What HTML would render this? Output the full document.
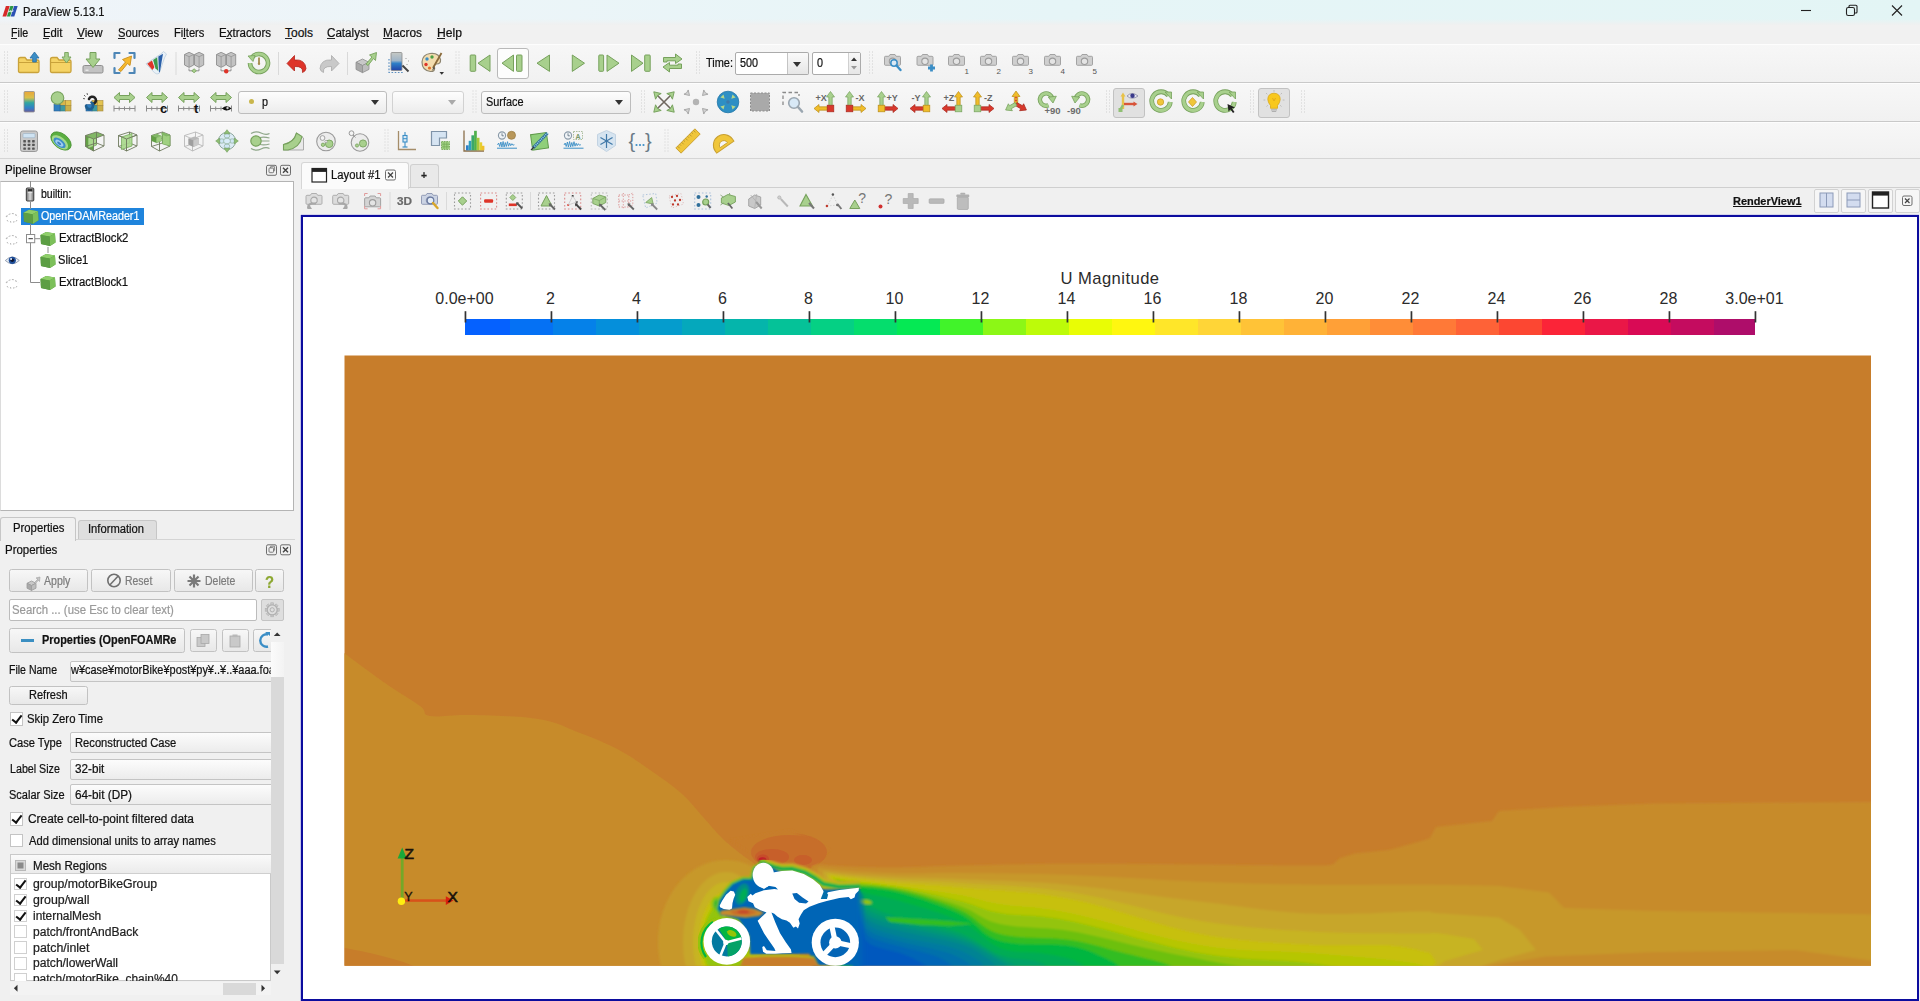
<!DOCTYPE html>
<html>
<head>
<meta charset="utf-8">
<title>ParaView 5.13.1</title>
<style>
*{box-sizing:border-box;margin:0;padding:0}
html,body{width:1920px;height:1001px;overflow:hidden;background:#f0f0f0;font-family:"Liberation Sans",sans-serif;font-size:12px;color:#111}
.abs{position:absolute}
#titlebar{left:0;top:0;width:1920px;height:25px;background:linear-gradient(180deg,rgba(240,240,240,0) 0,rgba(240,240,240,0) 19px,#f0f0f0 25px),linear-gradient(90deg,#eff4f9 0%,#ecf5f8 25%,#e6f5f7 55%,#e3f5f5 100%)}
#titlebar .t{left:23px;top:4px;font-size:12px;color:#1a1a1a;letter-spacing:0px}
#menubar{left:0;top:25px;width:1920px;height:19px;background:#f1f1f1}
#menubar span{position:absolute;top:4px;font-size:12px;color:#111}
#menubar u{text-decoration:underline;text-underline-offset:1px}
.tb{left:0;width:1920px;background:linear-gradient(#f7f7f7,#f1f1f1);border-top:1px solid #fdfdfd;border-bottom:1px solid #c9c9c9}
#tb1{top:44px;height:39px}
#tb2{top:83px;height:39px}
#tb3{top:122px;height:37px;border-bottom:1px solid #d5d5d5}
.grip{position:absolute;width:5px;height:24px;background-image:radial-gradient(circle,#c4c4c4 0.6px,transparent 0.9px);background-size:3px 3px}
.combo{position:absolute;height:23px;border:1px solid #bdbdbd;border-radius:3px;background:linear-gradient(#fdfdfd,#ececec);font-size:12px;line-height:21px;padding-left:6px;color:#111}
.combo:after{content:"";position:absolute;right:7px;top:8px;border:4px solid transparent;border-top:5px solid #333;border-bottom:0}
.combo.dis:after{border-top-color:#aaa}
.combo.dis{border-color:#d2d2d2}
/* panels */
.dockhdr{left:0;width:295px;height:19px;font-size:12px;color:#111}
.dockhdr .t{left:4px;top:2px}
.white{background:#fff;border:1px solid #bdbdbd}
.btn{position:absolute;border:1px solid #c3c3c3;border-radius:2px;background:linear-gradient(#f6f6f6,#e9e9e9);font-size:12px;text-align:center;color:#777}
.lbl{position:absolute;font-size:12px;color:#111;white-space:nowrap}
.field{position:absolute;height:21px;border:1px solid #c6c6c6;border-right:0;background:linear-gradient(#fbfbfb,#ededed);font-size:12px;line-height:19px;padding-left:4px;white-space:nowrap;overflow:hidden}

.tx{position:absolute;white-space:nowrap;transform-origin:0 0;display:inline-block;-webkit-text-stroke:0.22px currentColor}
.pbtn{border:1px solid #c2c2c2;border-radius:2.5px;background:linear-gradient(#f7f7f7,#e8e8e8)}
.fld{border:1px solid #c4c4c4;border-radius:2px 0 0 2px;background:linear-gradient(#fcfcfc,#ececec)}
.cmbbtn{border:1px solid #ababab;border-left:0;border-radius:0 2px 2px 0;background:linear-gradient(#fafafa,#e6e6e6)}
.cmbbtn:after{content:"";position:absolute;left:6px;top:9px;border:4.5px solid transparent;border-top:5px solid #333;border-bottom:0}
.cb{background:#fff;border:1px solid #c4c4c4}
.cb2{width:12.5px;height:12.5px;background:#fff;border:1px solid #d0d0d0}
.cb.on:after,.cb2.on:after{content:"";position:absolute;left:3.4px;top:-0.8px;width:3.6px;height:8px;border:solid #111;border-width:0 2.1px 2.1px 0;transform:rotate(38deg)}
.sep{position:absolute;width:1px;height:24px;background:#d6d6d6}
/* render view */
#rv{left:301px;top:215px;width:1618px;height:786px;background:#fff;border:2px solid #0c0c9e;box-shadow:-1px 0 0 rgba(160,160,230,0.55),0 -1px 0 rgba(160,160,230,0.35)}
</style>
</head>
<body>
<div id="titlebar" class="abs"></div>
<div id="menubar" class="abs"></div>
<div id="tb1" class="abs tb"></div>
<div id="tb2" class="abs tb"></div>
<div id="tb3" class="abs tb"></div>
<span class="tx" style="left:23.0px;top:5.5px;font-size:12px;line-height:12px;color:#141414;transform:scaleX(0.927);">ParaView 5.13.1</span>
<span class="tx" style="left:10.6px;top:26.7px;font-size:12px;line-height:12px;color:#111;transform:scaleX(0.890);">File</span>
<span class="tx" style="left:42.5px;top:26.7px;font-size:12px;line-height:12px;color:#111;transform:scaleX(0.943);">Edit</span>
<span class="tx" style="left:77.0px;top:26.7px;font-size:12px;line-height:12px;color:#111;transform:scaleX(0.989);">View</span>
<span class="tx" style="left:117.5px;top:26.7px;font-size:12px;line-height:12px;color:#111;transform:scaleX(0.931);">Sources</span>
<span class="tx" style="left:174.0px;top:26.7px;font-size:12px;line-height:12px;color:#111;transform:scaleX(0.931);">Filters</span>
<span class="tx" style="left:219.0px;top:26.7px;font-size:12px;line-height:12px;color:#111;transform:scaleX(0.963);">Extractors</span>
<span class="tx" style="left:285.0px;top:26.7px;font-size:12px;line-height:12px;color:#111;transform:scaleX(1.000);">Tools</span>
<span class="tx" style="left:327.0px;top:26.7px;font-size:12px;line-height:12px;color:#111;transform:scaleX(0.969);">Catalyst</span>
<span class="tx" style="left:383.0px;top:26.7px;font-size:12px;line-height:12px;color:#111;transform:scaleX(0.991);">Macros</span>
<span class="tx" style="left:437.0px;top:26.7px;font-size:12px;line-height:12px;color:#111;transform:scaleX(1.013);">Help</span>
<div class="abs " style="left:10.6px;top:38.2px;width:6.0px;height:1.0px;background:#222"></div>
<div class="abs " style="left:42.5px;top:38.2px;width:6.5px;height:1.0px;background:#222"></div>
<div class="abs " style="left:77.0px;top:38.2px;width:7.0px;height:1.0px;background:#222"></div>
<div class="abs " style="left:117.5px;top:38.2px;width:7.0px;height:1.0px;background:#222"></div>
<div class="abs " style="left:183.0px;top:38.2px;width:2.5px;height:1.0px;background:#222"></div>
<div class="abs " style="left:225.5px;top:38.2px;width:5.5px;height:1.0px;background:#222"></div>
<div class="abs " style="left:285.0px;top:38.2px;width:6.5px;height:1.0px;background:#222"></div>
<div class="abs " style="left:327.0px;top:38.2px;width:7.5px;height:1.0px;background:#222"></div>
<div class="abs " style="left:383.0px;top:38.2px;width:9.0px;height:1.0px;background:#222"></div>
<div class="abs " style="left:437.0px;top:38.2px;width:8.0px;height:1.0px;background:#222"></div>
<span class="tx" style="left:705.5px;top:57.3px;font-size:12px;line-height:12px;color:#111;transform:scaleX(0.914);">Time:</span>
<div class="abs " style="left:735.0px;top:52.0px;width:53.0px;height:23.0px;background:#fff;border:1px solid #ababab;border-radius:2px 0 0 2px"></div>
<span class="tx" style="left:740.0px;top:57.3px;font-size:12px;line-height:12px;color:#111;transform:scaleX(0.899);">500</span>
<div class="abs cmbbtn" style="left:787.0px;top:52.0px;width:22.0px;height:23.0px;"></div>
<div class="abs " style="left:787.0px;top:53.0px;width:1.0px;height:21.0px;background:#c4c4c4"></div>
<div class="abs " style="left:812.0px;top:52.0px;width:49.0px;height:23.0px;background:#fff;border:1px solid #ababab;border-radius:2px"></div>
<span class="tx" style="left:817.0px;top:57.3px;font-size:12px;line-height:12px;color:#111;transform:scaleX(0.899);">0</span>
<div class="abs " style="left:848.0px;top:53.0px;width:12.0px;height:21.0px;background:linear-gradient(#f8f8f8,#e6e6e6);border-left:1px solid #d0d0d0"></div>
<div class="abs combo" style="left:238.0px;top:90.5px;width:149.0px;height:23.0px;"></div>
<span class="tx" style="left:262.0px;top:96.1px;font-size:12px;line-height:12px;color:#111;transform:scaleX(0.899);">p</span>
<div class="abs " style="left:249.0px;top:99.0px;width:5.0px;height:5.0px;background:#c9b64c;border-radius:50%"></div>
<div class="abs combo dis" style="left:392.0px;top:90.5px;width:72.0px;height:23.0px;"></div>
<div class="abs combo" style="left:481.0px;top:90.5px;width:150.0px;height:23.0px;"></div>
<span class="tx" style="left:486.0px;top:95.8px;font-size:12px;line-height:12px;color:#111;transform:scaleX(0.907);">Surface</span>
<div class="abs " style="left:497.0px;top:48.0px;width:32.0px;height:30.5px;background:#fdfdfd;border:1px solid #b9b9b9;border-radius:3px"></div>
<div class="abs " style="left:1113.0px;top:87.5px;width:32.0px;height:30.0px;background:#e1e1e1;border:1px solid #c2c2c2;border-radius:3px"></div>
<div class="abs " style="left:1258.0px;top:87.5px;width:32.0px;height:30.0px;background:#e1e1e1;border:1px solid #c2c2c2;border-radius:3px"></div>
<span class="tx" style="left:4.7px;top:164.3px;font-size:12px;line-height:12px;color:#111;transform:scaleX(0.963);">Pipeline Browser</span>
<div class="abs " style="left:0.0px;top:180.5px;width:293.5px;height:330.0px;background:#fff;border:1px solid #b4b4b4;border-left-color:#dcdcdc"></div>
<div class="abs " style="left:21.0px;top:207.7px;width:122.8px;height:17.3px;background:#1f84dc"></div>
<span class="tx" style="left:40.6px;top:187.7px;font-size:12px;line-height:12px;color:#111;transform:scaleX(0.876);">builtin:</span>
<span class="tx" style="left:40.6px;top:209.6px;font-size:12px;line-height:12px;color:#fff;transform:scaleX(0.894);">OpenFOAMReader1</span>
<span class="tx" style="left:59.0px;top:232.2px;font-size:12px;line-height:12px;color:#111;transform:scaleX(0.946);">ExtractBlock2</span>
<span class="tx" style="left:58.0px;top:253.9px;font-size:12px;line-height:12px;color:#111;transform:scaleX(0.927);">Slice1</span>
<span class="tx" style="left:59.0px;top:276.0px;font-size:12px;line-height:12px;color:#111;transform:scaleX(0.941);">ExtractBlock1</span>
<div class="abs " style="left:0.0px;top:539.0px;width:295.0px;height:1.0px;background:#d4d4d4"></div>
<div class="abs " style="left:0.0px;top:517.0px;width:76.0px;height:23.5px;background:#f0f0f0;border:1px solid #c6c6c6;border-bottom:0;border-radius:3px 3px 0 0"></div>
<div class="abs " style="left:77.5px;top:519.5px;width:79.5px;height:19.8px;background:#dedede;border:1px solid #c6c6c6;border-bottom:0;border-radius:3px 3px 0 0"></div>
<span class="tx" style="left:12.5px;top:522.4px;font-size:12px;line-height:12px;color:#111;transform:scaleX(0.942);">Properties</span>
<span class="tx" style="left:88.0px;top:522.6px;font-size:12px;line-height:12px;color:#111;transform:scaleX(0.933);">Information</span>
<span class="tx" style="left:4.7px;top:544.0px;font-size:12px;line-height:12px;color:#111;transform:scaleX(0.956);">Properties</span>
<div class="abs pbtn" style="left:9.0px;top:568.8px;width:79.3px;height:23.5px;"></div>
<div class="abs pbtn" style="left:91.4px;top:568.8px;width:79.2px;height:23.5px;"></div>
<div class="abs pbtn" style="left:173.5px;top:568.8px;width:79.0px;height:23.5px;"></div>
<div class="abs pbtn" style="left:255.3px;top:568.8px;width:28.5px;height:23.5px;"></div>
<span class="tx" style="left:43.6px;top:574.8px;font-size:12px;line-height:12px;color:#7c7c7c;transform:scaleX(0.879);">Apply</span>
<span class="tx" style="left:124.7px;top:574.8px;font-size:12px;line-height:12px;color:#7c7c7c;transform:scaleX(0.871);">Reset</span>
<span class="tx" style="left:204.7px;top:574.8px;font-size:12px;line-height:12px;color:#7c7c7c;transform:scaleX(0.874);">Delete</span>
<span class="tx" style="left:265.0px;top:573.6px;font-size:17px;line-height:17px;color:#8da832;font-weight:bold;transform:scaleX(0.867);">?</span>
<div class="abs " style="left:9.0px;top:598.8px;width:248.3px;height:22.0px;background:#fff;border:1px solid #bcbcbc;border-radius:2px"></div>
<span class="tx" style="left:11.7px;top:603.6px;font-size:12px;line-height:12px;color:#9a9a9a;transform:scaleX(0.948);">Search ... (use Esc to clear text)</span>
<div class="abs " style="left:260.5px;top:598.6px;width:23.3px;height:22.4px;background:#dedede;border:1px solid #c4c4c4;border-radius:2px"></div>
<div class="abs pbtn" style="left:9.0px;top:627.8px;width:176.2px;height:25.0px;"></div>
<div class="abs " style="left:20.8px;top:639.4px;width:13.0px;height:3.0px;background:#3b8fc2"></div>
<span class="tx" style="left:41.6px;top:634.0px;font-size:12px;line-height:12px;color:#111;font-weight:bold;transform:scaleX(0.908);">Properties (OpenFOAMRe</span>
<div class="abs pbtn" style="left:190.0px;top:629.0px;width:26.5px;height:23.2px;"></div>
<div class="abs pbtn" style="left:221.6px;top:629.0px;width:27.0px;height:23.2px;"></div>
<div class="abs pbtn" style="left:253.2px;top:629.0px;width:21.8px;height:23.2px;"></div>
<span class="tx" style="left:9.0px;top:664.4px;font-size:12px;line-height:12px;color:#111;transform:scaleX(0.878);">File Name</span>
<div class="abs fld" style="left:70.0px;top:660.5px;width:206.0px;height:21.0px;"></div>
<span class="tx" style="left:71.0px;top:664.4px;font-size:12px;line-height:12px;color:#111;transform:scaleX(0.912);clip-path:inset(0 6.2% 0 0);">w¥case¥motorBike¥post¥py¥..¥..¥aaa.foam</span>
<div class="abs pbtn" style="left:9.0px;top:685.6px;width:79.3px;height:19.8px;"></div>
<span class="tx" style="left:29.4px;top:689.4px;font-size:12px;line-height:12px;color:#111;transform:scaleX(0.919);">Refresh</span>
<div class="abs cb on" style="left:9.7px;top:712.3px;width:13.3px;height:13.3px;"></div>
<span class="tx" style="left:27.3px;top:712.8px;font-size:12px;line-height:12px;color:#111;transform:scaleX(0.943);">Skip Zero Time</span>
<span class="tx" style="left:8.6px;top:736.7px;font-size:12px;line-height:12px;color:#111;transform:scaleX(0.927);">Case Type</span>
<div class="abs fld" style="left:70.0px;top:732.3px;width:206.0px;height:21.0px;"></div>
<span class="tx" style="left:75.3px;top:736.7px;font-size:12px;line-height:12px;color:#111;transform:scaleX(0.932);">Reconstructed Case</span>
<span class="tx" style="left:9.5px;top:762.9px;font-size:12px;line-height:12px;color:#111;transform:scaleX(0.890);">Label Size</span>
<div class="abs fld" style="left:70.0px;top:758.6px;width:206.0px;height:21.0px;"></div>
<span class="tx" style="left:74.7px;top:762.9px;font-size:12px;line-height:12px;color:#111;transform:scaleX(0.976);">32-bit</span>
<span class="tx" style="left:8.8px;top:788.8px;font-size:12px;line-height:12px;color:#111;transform:scaleX(0.916);">Scalar Size</span>
<div class="abs fld" style="left:70.0px;top:784.4px;width:206.0px;height:21.0px;"></div>
<span class="tx" style="left:74.7px;top:788.8px;font-size:12px;line-height:12px;color:#111;transform:scaleX(0.981);">64-bit (DP)</span>
<div class="abs cb on" style="left:9.5px;top:812.4px;width:13.3px;height:13.3px;"></div>
<span class="tx" style="left:27.6px;top:812.6px;font-size:12px;line-height:12px;color:#111;transform:scaleX(0.991);">Create cell-to-point filtered data</span>
<div class="abs cb" style="left:9.5px;top:834.0px;width:13.3px;height:13.3px;"></div>
<span class="tx" style="left:28.8px;top:834.6px;font-size:12px;line-height:12px;color:#111;transform:scaleX(0.930);">Add dimensional units to array names</span>
<div class="abs " style="left:270.5px;top:627.0px;width:13.5px;height:354.0px;background:#f0f0f0"></div>
<div class="abs " style="left:270.5px;top:642.0px;width:13.5px;height:35.0px;background:linear-gradient(90deg,#fbfbfb,#f3f3f3)"></div>
<div class="abs " style="left:270.5px;top:677.0px;width:13.5px;height:287.0px;background:#d9d9d9"></div>
<div class="abs " style="left:9.5px;top:853.5px;width:261.0px;height:127.5px;background:#fff;border:1px solid #c9c9c9"></div>
<div class="abs " style="left:10.5px;top:854.5px;width:260.0px;height:19.5px;background:linear-gradient(#fafafa,#ebebeb);border-bottom:1px solid #cfcfcf"></div>
<div class="abs " style="left:14.5px;top:859.6px;width:11.5px;height:11.4px;background:#8a8a8a;border:1px solid #b8b8b8;box-shadow:inset 0 0 0 1.5px #d8d8d8"></div>
<span class="tx" style="left:32.6px;top:859.7px;font-size:12px;line-height:12px;color:#111;transform:scaleX(0.963);">Mesh Regions</span>
<div class="abs" style="left:10.5px;top:875px;width:260px;height:105.6px;overflow:hidden">
<div class="abs cb2 on" style="left:3.6px;top:2.6px"></div>
<span class="tx" style="left:22.8px;top:2.7px;font-size:12px;line-height:12px;color:#222;transform:scaleX(1.022)">group/motorBikeGroup</span>
<div class="abs cb2 on" style="left:3.6px;top:18.5px"></div>
<span class="tx" style="left:22.8px;top:18.7px;font-size:12px;line-height:12px;color:#222;transform:scaleX(1.031)">group/wall</span>
<div class="abs cb2 on" style="left:3.6px;top:34.5px"></div>
<span class="tx" style="left:22.8px;top:34.6px;font-size:12px;line-height:12px;color:#222;transform:scaleX(0.993)">internalMesh</span>
<div class="abs cb2" style="left:3.6px;top:50.4px"></div>
<span class="tx" style="left:22.8px;top:50.5px;font-size:12px;line-height:12px;color:#222;transform:scaleX(1.005)">patch/frontAndBack</span>
<div class="abs cb2" style="left:3.6px;top:66.3px"></div>
<span class="tx" style="left:22.8px;top:66.5px;font-size:12px;line-height:12px;color:#222;transform:scaleX(1.031)">patch/inlet</span>
<div class="abs cb2" style="left:3.6px;top:82.2px"></div>
<span class="tx" style="left:22.8px;top:82.4px;font-size:12px;line-height:12px;color:#222;transform:scaleX(1.009)">patch/lowerWall</span>
<div class="abs cb2" style="left:3.6px;top:98.2px"></div>
<span class="tx" style="left:22.8px;top:98.3px;font-size:12px;line-height:12px;color:#222;transform:scaleX(0.991)">patch/motorBike_chain%40</span>
</div>
<div class="abs " style="left:9.5px;top:981.5px;width:261.0px;height:13.5px;background:#f3f3f3"></div>
<div class="abs " style="left:223.0px;top:982.5px;width:33.3px;height:12.0px;background:#d9d9d9"></div>
<div class="abs " style="left:301.0px;top:187.0px;width:1619.0px;height:1.0px;background:#cfcfcf"></div>
<div class="abs " style="left:300.5px;top:162.0px;width:108.5px;height:26.5px;background:#fbfbfb;border:1px solid #d6d6d6;border-bottom:0;border-radius:3px 3px 0 0"></div>
<div class="abs " style="left:409.5px;top:164.0px;width:29.0px;height:23.3px;background:#e9e9e9;border:1px solid #d0d0d0;border-bottom:0;border-radius:3px 3px 0 0"></div>
<span class="tx" style="left:331.0px;top:169.0px;font-size:12px;line-height:12px;color:#111;transform:scaleX(0.939);">Layout #1</span>
<span class="tx" style="left:420.5px;top:169.7px;font-size:11px;line-height:11px;color:#222;font-weight:bold;transform:scaleX(0.934);">+</span>
<span class="tx" style="left:397.0px;top:196.0px;font-size:11px;line-height:11px;color:#6a6a6a;font-weight:bold;transform:scaleX(1.067);">3D</span>
<span class="tx" style="left:1733.0px;top:195.7px;font-size:11.5px;line-height:11.5px;color:#111;font-weight:bold;transform:scaleX(0.951);text-decoration:underline;">RenderView1</span>
<div class="abs " style="left:1814.0px;top:188.5px;width:24.5px;height:24.5px;background:#f6f6f6;border:1px solid #d2d2d2;border-radius:2px"></div>
<div class="abs " style="left:1841.0px;top:188.5px;width:24.5px;height:24.5px;background:#f6f6f6;border:1px solid #d2d2d2;border-radius:2px"></div>
<div class="abs " style="left:1868.0px;top:188.5px;width:24.5px;height:24.5px;background:#f6f6f6;border:1px solid #d2d2d2;border-radius:2px"></div>
<div class="abs " style="left:1895.0px;top:188.5px;width:24.5px;height:24.5px;background:#f6f6f6;border:1px solid #d2d2d2;border-radius:2px"></div>
<div id="rv" class="abs"></div>
<svg class="abs" style="left:0;top:0" width="1920" height="1001" viewBox="0 0 1920 1001">
<defs><clipPath id="fc"><rect x="344.5" y="355.5" width="1526.5" height="610.3"/></clipPath>
<filter id="b1" x="-5%" y="-5%" width="110%" height="110%"><feGaussianBlur stdDeviation="1.1"/></filter>
<filter id="b2" x="-5%" y="-5%" width="110%" height="110%"><feGaussianBlur stdDeviation="0.7"/></filter>
<filter id="b3" x="-20%" y="-20%" width="140%" height="140%"><feGaussianBlur stdDeviation="2"/></filter></defs>
<g clip-path="url(#fc)">
<rect x="342.5" y="353.5" width="1530.5" height="614.3" fill="#c77d2b"/>
<g filter="url(#b2)">
<path d="M340.0,650.0 C348.1,655.9 370.6,672.9 385.0,683.0 C399.4,693.1 411.9,700.1 420.0,706.0 C428.1,711.9 421.0,714.4 430.0,716.0 C439.0,717.6 450.6,714.5 470.0,715.0 C489.4,715.5 518.2,715.8 538.0,719.0 C557.8,722.2 565.4,727.4 580.0,733.0 C594.6,738.6 606.4,743.3 619.0,750.0 C631.6,756.7 638.8,762.3 650.0,770.0 C661.2,777.7 671.5,784.5 681.0,793.0 C690.5,801.5 695.8,809.1 703.0,817.0 C710.2,824.9 714.9,830.9 721.0,837.0 C727.1,843.1 731.4,846.5 737.0,851.0 C742.6,855.5 749.3,860.0 752.0,862.0 L800.0,900.0 L800.0,967.8 L340.0,967.8Z" fill="#c78b2b" />
<path d="M340.0,947.0 C345.4,948.1 359.2,950.5 370.0,953.0 C380.8,955.5 391.4,958.3 400.0,961.0 C408.6,963.7 414.8,966.6 418.0,967.8 L340.0,967.8Z" fill="#c77d2b" />
</g>
<g filter="url(#b2)">
<ellipse cx="789" cy="852" rx="38" ry="19" fill="#c76e2b"/>
<ellipse cx="772" cy="857" rx="17" ry="8" fill="#c75e2b"/>
<ellipse cx="803" cy="860" rx="9" ry="5" fill="#c75e2b"/>
<ellipse cx="763" cy="859" rx="6" ry="4.5" fill="#c64d2b"/>
<ellipse cx="762" cy="860.5" rx="4" ry="3" fill="#c31c2c"/>
</g>
<g filter="url(#b1)">
<path d="M812.0,864.0 C818.8,864.5 834.2,865.9 850.0,866.5 C865.8,867.1 880.2,867.7 900.0,867.5 C919.8,867.3 929.4,866.3 960.0,865.6 C990.6,864.9 1026.8,864.0 1070.0,863.8 C1113.2,863.6 1156.8,864.1 1200.0,864.4 C1243.2,864.7 1286.1,865.6 1310.0,865.6 C1333.9,865.6 1328.9,864.6 1333.0,864.4 L1340.0,858.0 L1355.0,853.4 L1389.0,850.0 L1425.0,840.0 L1430.0,838.0 L1436.0,827.0 L1492.0,821.0 L1499.0,811.0 L1561.0,807.0 L1655.0,803.5 L1875.0,802.0 L1875.0,967.8 L812.0,967.8Z" fill="#c78b2b" />
<path d="M818.0,868.0 C823.8,868.5 835.2,870.0 850.0,871.0 C864.8,872.0 880.2,873.1 900.0,873.5 C919.8,873.9 929.4,872.7 960.0,873.0 C990.6,873.3 1026.8,873.4 1070.0,875.0 C1113.2,876.6 1156.8,880.0 1200.0,881.8 C1243.2,883.6 1270.4,884.3 1310.0,884.8 C1349.6,885.3 1386.0,884.6 1420.0,884.8 C1454.0,885.0 1484.8,885.8 1499.0,886.0 L1549.0,892.5 L1564.0,908.0 L1655.0,911.0 L1875.0,914.4 L1875.0,961.0 L1795.0,950.0 L1655.0,952.0 L1545.0,956.5 L1477.0,967.8 L818.0,967.8Z" fill="#c7982b" />
<path d="M823.0,871.0 C827.9,871.5 836.1,872.9 850.0,874.0 C863.9,875.1 880.2,876.1 900.0,877.0 C919.8,877.9 929.4,877.6 960.0,879.0 C990.6,880.4 1026.8,880.9 1070.0,885.0 C1113.2,889.1 1156.8,896.5 1200.0,901.6 C1243.2,906.7 1270.4,911.7 1310.0,913.5 C1349.6,915.3 1397.3,911.6 1420.0,911.5 C1442.7,911.4 1421.8,911.9 1436.0,913.0 C1450.2,914.1 1487.7,916.7 1499.0,917.5 L1520.0,930.0 L1536.0,950.0 L1500.0,960.0 L1477.0,967.8 L823.0,967.8Z" fill="#c7a62b" />
<path d="M827.0,873.0 C831.1,873.5 836.9,874.7 850.0,876.0 C863.1,877.3 880.2,878.7 900.0,880.0 C919.8,881.3 929.4,880.8 960.0,883.0 C990.6,885.2 1026.8,885.2 1070.0,892.0 C1113.2,898.8 1156.8,913.6 1200.0,920.7 C1243.2,927.8 1270.4,929.2 1310.0,931.5 C1349.6,933.8 1397.3,933.2 1420.0,933.5 C1442.7,933.8 1426.3,932.0 1436.0,933.0 C1445.7,934.0 1467.2,937.9 1474.0,939.0 L1483.0,950.0 L1445.0,961.0 L1436.0,967.8 L827.0,967.8Z" fill="#c7b420" />
<path d="M830.0,875.0 C833.6,875.5 837.4,876.6 850.0,878.0 C862.6,879.4 880.2,881.3 900.0,883.0 C919.8,884.7 929.4,884.6 960.0,887.5 C990.6,890.4 1026.8,890.6 1070.0,899.0 C1113.2,907.4 1156.8,925.8 1200.0,934.0 C1243.2,942.2 1276.0,942.6 1310.0,944.7 C1344.0,946.8 1367.4,944.1 1389.0,945.6 C1410.6,947.1 1422.6,951.7 1430.0,953.0 L1436.0,962.0 L1432.0,967.8 L830.0,967.8Z" fill="#c7c00c" />
<path d="M833.0,877.0 C836.1,877.5 837.9,878.4 850.0,880.0 C862.1,881.6 880.2,883.3 900.0,886.0 C919.8,888.7 942.0,891.8 960.0,895.0 C978.0,898.2 980.2,900.8 1000.0,904.0 C1019.8,907.2 1034.0,905.6 1070.0,913.0 C1106.0,920.4 1156.8,937.8 1200.0,945.0 C1243.2,952.2 1274.0,950.1 1310.0,953.0 C1346.0,955.9 1378.0,958.3 1400.0,961.0 C1422.0,963.7 1426.2,966.6 1432.0,967.8 L833.0,967.8Z" fill="#b6c604" />
<path d="M836.0,879.0 C838.5,879.5 838.5,880.5 850.0,882.0 C861.5,883.5 880.2,884.1 900.0,887.5 C919.8,890.9 942.0,896.4 960.0,901.0 C978.0,905.6 980.2,909.4 1000.0,913.0 C1019.8,916.6 1034.0,913.8 1070.0,921.0 C1106.0,928.2 1158.6,945.6 1200.0,953.0 C1241.4,960.4 1274.4,959.3 1300.0,962.0 C1325.6,964.7 1334.4,966.8 1342.0,967.8 L836.0,967.8Z" fill="#94c407" />
<path d="M838.0,881.0 C840.2,881.5 838.8,882.1 850.0,883.5 C861.2,884.9 880.2,885.0 900.0,889.0 C919.8,893.0 942.0,899.7 960.0,906.0 C978.0,912.3 980.2,919.5 1000.0,924.0 C1019.8,928.5 1043.0,926.5 1070.0,931.0 C1097.0,935.5 1123.9,943.4 1150.0,949.0 C1176.1,954.6 1197.0,958.6 1215.0,962.0 C1233.0,965.4 1243.7,966.8 1250.0,967.8 L838.0,967.8Z" fill="#6dc011" />
<path d="M840.0,882.5 C842.2,883.0 841.2,883.6 852.0,885.0 C862.8,886.4 880.6,886.0 900.0,890.5 C919.4,895.0 942.0,902.2 960.0,910.0 C978.0,917.8 980.2,928.6 1000.0,934.0 C1019.8,939.4 1048.4,936.8 1070.0,940.0 C1091.6,943.2 1103.8,948.0 1120.0,952.0 C1136.2,956.0 1150.1,959.2 1160.0,962.0 C1169.9,964.8 1172.3,966.8 1175.0,967.8 L840.0,967.8Z" fill="#33bd20" />
<path d="M842.0,884.0 C844.2,884.5 843.6,884.9 854.0,886.5 C864.4,888.1 880.9,888.0 900.0,893.0 C919.1,898.0 942.0,905.4 960.0,914.0 C978.0,922.6 980.2,935.2 1000.0,941.0 C1019.8,946.8 1051.1,942.9 1070.0,946.0 C1088.9,949.1 1095.6,954.1 1105.0,958.0 C1114.4,961.9 1118.9,966.0 1122.0,967.8 L842.0,967.8Z" fill="#04b641" />
<path d="M844.0,885.0 C846.2,885.7 851.3,887.4 856.0,889.0 C860.7,890.6 862.1,891.8 870.0,894.0 C877.9,896.2 883.8,896.1 900.0,901.0 C916.2,905.9 942.0,912.5 960.0,921.0 C978.0,929.5 985.6,942.2 1000.0,948.0 C1014.4,953.8 1027.4,951.0 1040.0,953.0 C1052.6,955.0 1061.4,956.3 1070.0,959.0 C1078.6,961.7 1084.8,966.2 1088.0,967.8 L844.0,967.8Z" fill="#04ac55" />
<path d="M848.0,888.0 C849.8,889.4 854.0,892.8 858.0,896.0 C862.0,899.2 862.4,902.0 870.0,906.0 C877.6,910.0 883.8,913.1 900.0,918.0 C916.2,922.9 942.0,926.3 960.0,933.0 C978.0,939.7 986.5,950.0 1000.0,955.0 C1013.5,960.0 1026.0,958.7 1035.0,961.0 C1044.0,963.3 1047.3,966.6 1050.0,967.8 L848.0,967.8Z" fill="#04a267" />
<path d="M850.0,890.0 C851.6,891.8 855.4,896.2 859.0,900.0 C862.6,903.8 862.6,907.0 870.0,911.0 C877.4,915.0 883.8,917.4 900.0,922.0 C916.2,926.6 942.0,930.0 960.0,936.5 C978.0,943.0 988.8,952.4 1000.0,958.0 C1011.2,963.6 1018.0,966.0 1022.0,967.8 L850.0,967.8Z" fill="#049877" />
<path d="M852.0,892.0 C853.4,894.2 856.8,899.7 860.0,904.0 C863.2,908.3 862.8,912.0 870.0,916.0 C877.2,920.0 883.8,921.7 900.0,926.0 C916.2,930.3 943.8,934.8 960.0,940.0 C976.2,945.2 981.0,950.0 990.0,955.0 C999.0,960.0 1006.4,965.5 1010.0,967.8 L852.0,967.8Z" fill="#048d86" />
<path d="M853.0,894.0 C854.3,896.5 856.9,903.1 860.0,908.0 C863.1,912.9 862.8,916.9 870.0,921.0 C877.2,925.1 883.8,926.9 900.0,931.0 C916.2,935.1 944.7,939.3 960.0,944.0 C975.3,948.7 978.2,952.7 985.0,957.0 C991.8,961.3 995.7,965.9 998.0,967.8 L853.0,967.8Z" fill="#048393" />
<path d="M854.0,897.0 C855.3,899.7 858.1,906.8 861.0,912.0 C863.9,917.2 863.0,921.6 870.0,926.0 C877.0,930.4 885.6,932.7 900.0,936.5 C914.4,940.3 936.5,943.1 950.0,947.0 C963.5,950.9 968.5,954.3 975.0,958.0 C981.5,961.7 984.0,966.0 986.0,967.8 L854.0,967.8Z" fill="#047aa0" />
<path d="M855.0,900.0 C856.1,903.1 858.3,911.3 861.0,917.0 C863.7,922.7 863.0,927.1 870.0,931.5 C877.0,935.9 886.5,937.8 900.0,941.5 C913.5,945.2 933.3,948.5 945.0,952.0 C956.7,955.5 960.0,958.2 965.0,961.0 C970.0,963.8 971.6,966.6 973.0,967.8 L855.0,967.8Z" fill="#046fab" />
<path d="M856.0,904.0 C857.1,907.2 859.5,916.1 862.0,922.0 C864.5,927.9 863.2,932.6 870.0,937.0 C876.8,941.4 888.3,943.1 900.0,946.5 C911.7,949.9 925.1,952.2 935.0,956.0 C944.9,959.8 951.4,965.7 955.0,967.8 L856.0,967.8Z" fill="#0465b6" />
<path d="M857.0,908.0 C857.9,911.6 859.7,921.5 862.0,928.0 C864.3,934.5 863.2,939.5 870.0,944.0 C876.8,948.5 891.0,949.8 900.0,953.0 C909.0,956.2 915.0,959.3 920.0,962.0 C925.0,964.7 926.6,966.8 928.0,967.8 L857.0,967.8Z" fill="#0458be" />
<ellipse cx="866" cy="902" rx="6" ry="2.2" fill="#94c407" transform="rotate(8 866 902)"/>
<path d="M885.0,917.0 C891.3,917.4 908.3,918.3 920.0,919.0 C931.7,919.7 940.1,920.1 950.0,921.0 C959.9,921.9 970.5,923.5 975.0,924.0 L950.0,926.0 L920.0,925.0 L890.0,922.0Z" fill="#33bd20" />
</g>
</g>
<g clip-path="url(#fc)">
<g filter="url(#b1)">
<ellipse cx="726.0" cy="942.0" rx="68.0" ry="82.0" fill="#c7982b"/>
<ellipse cx="726.0" cy="942.0" rx="43.0" ry="70.0" fill="#c7a62b"/>
<ellipse cx="726.0" cy="942.0" rx="33.0" ry="60.0" fill="#c7b420"/>
<ellipse cx="726.0" cy="942.0" rx="27.0" ry="50.0" fill="#c7c00c"/>
<ellipse cx="726.0" cy="942.0" rx="24.5" ry="44.0" fill="#b6c604"/>
<ellipse cx="726.0" cy="942.0" rx="23.0" ry="40.0" fill="#94c407"/>
<ellipse cx="716.5" cy="904" rx="5.5" ry="7.5" fill="#94c407"/>
<ellipse cx="717.5" cy="904.5" rx="3.6" ry="5.5" fill="#04b641"/>
<polygon points="730.00,840.00 760.00,858.00 815.00,866.00 830.00,850.00 790.00,830.00" fill="#c77d2b" />
</g>
<g filter="url(#b2)">
<ellipse cx="789" cy="852" rx="38" ry="17" fill="#c76e2b"/>
<ellipse cx="772" cy="857" rx="17" ry="8" fill="#c75e2b"/>
<ellipse cx="803" cy="860" rx="9" ry="5" fill="#c75e2b"/>
<ellipse cx="763" cy="859" rx="6" ry="4.5" fill="#c64d2b"/>
<ellipse cx="762.5" cy="860.3" rx="4" ry="3" fill="#c31c2c"/>
</g>
<g filter="url(#b1)">
<polyline points="759.37,862.13 774.31,867.07 781.90,869.02 792.24,868.79 804.89,872.47 815.23,878.22 823.28,883.97 839.37,886.84 860.06,886.26" fill="none" stroke="#c7a62b" stroke-width="11" stroke-linejoin="round"/>
<polyline points="759.37,862.13 774.31,867.07 781.90,869.02 792.24,868.79 804.89,872.47 815.23,878.22 823.28,883.97 839.37,886.84 860.06,886.26" fill="none" stroke="#c7c00c" stroke-width="8" stroke-linejoin="round"/>
<polyline points="759.37,862.13 774.31,867.07 781.90,869.02 792.24,868.79 804.89,872.47 815.23,878.22 823.28,883.97 839.37,886.84 860.06,886.26" fill="none" stroke="#6dc011" stroke-width="5.5" stroke-linejoin="round"/>
<polyline points="759.37,862.13 774.31,867.07 781.90,869.02 792.24,868.79 804.89,872.47 815.23,878.22 823.28,883.97 839.37,886.84 860.06,886.26" fill="none" stroke="#04ac55" stroke-width="3.2" stroke-linejoin="round"/>
</g>
<g filter="url(#b1)">
<polyline points="721.44,914.77 717.99,909.02 719.71,900.98 726.03,891.78 732.93,884.31 743.28,879.71 752.47,879.71 754.77,868.79 763.97,863.05" fill="none" stroke="#94c407" stroke-width="6" stroke-linejoin="round" stroke-linecap="round"/>
<polyline points="721.44,914.77 717.99,909.02 719.71,900.98 726.03,891.78 732.93,884.31 743.28,879.71 752.47,879.71 754.77,868.79 763.97,863.05" fill="none" stroke="#04ac55" stroke-width="3" stroke-linejoin="round" stroke-linecap="round"/>
<polygon points="717.99,909.02 719.71,900.98 726.03,891.78 732.93,884.31 743.28,879.71 752.47,879.71 754.77,868.79 763.97,863.62 781.90,872.24 804.89,876.26 823.28,889.48 860.06,888.56 857.76,894.08 854.31,903.28 853.16,919.37 855.46,935.46 857.76,965.34 812.93,965.34 809.48,953.85 768.56,954.43 750.17,954.43 749.02,935.46 738.68,919.37 722.59,914.77" fill="#0465b6"/>
<defs><linearGradient id="gsm" gradientUnits="userSpaceOnUse" x1="856" y1="0" x2="867" y2="0"><stop offset="0" stop-color="#0465b6"/><stop offset="1" stop-color="#0465b6" stop-opacity="0"/></linearGradient></defs>
<polygon points="853,893 859,890 864,896 870,968 853,968" fill="url(#gsm)"/>
<ellipse cx="742.1" cy="894.1" rx="6.5" ry="11" fill="#048d86" transform="rotate(20 742.1 894.1)"/>
<ellipse cx="743.3" cy="895.2" rx="3.5" ry="7" fill="#04ac55" transform="rotate(20 743.3 895.2)"/>
</g>
<g filter="url(#b1)">
<polygon points="720.86,910.75 732.93,909.02 744.43,907.30 754.77,909.02 763.97,912.47 759.37,915.92 745.57,917.64 729.48,915.92 719.71,914.77" fill="#c78b2b" />
<polygon points="729.48,911.32 743.28,908.79 752.47,910.17 757.07,912.47 749.02,915.34 734.08,914.77" fill="#c76e2b" />
<ellipse cx="743.3" cy="911.9" rx="6" ry="2.2" fill="#c64d2b"/>
</g>
<g filter="url(#b1)">
<polygon points="743.28,956.15 763.97,954.77 792.24,954.77 814.08,956.15 820.98,969.94 738.68,969.94" fill="#b6c604" />
<polygon points="743.28,957.87 763.97,956.38 792.24,956.38 814.08,957.87 820.98,969.94 738.68,969.94" fill="#c77d2b" />
</g>
<g filter="url(#b2)">
<path d="M705,958 A25,25 0 0 1 716,919" fill="none" stroke="#94c407" stroke-width="4"/>
<path d="M706,957 A24.5,24.5 0 0 1 713,922" fill="none" stroke="#04b641" stroke-width="2.2"/>
</g>
<circle cx="726.8" cy="941.4" r="23.3" fill="#ffffff"/>
<circle cx="726.8" cy="941.4" r="15.0" fill="#047aa0"/>
<path d="M726.8,941.4 L718.8,928.7 A15,15 0 0 1 741.4,938.0 Z" fill="#04b641"/>
<ellipse cx="731.8" cy="933.4" rx="5" ry="3" fill="#94c407" transform="rotate(25 731.8 933.4)"/>
<path d="M726.8,941.4 L741.6,939.4 A15,15 0 0 1 727.8,956.4 Z" fill="#04a267"/>
<line x1="725.8" y1="942.4" x2="741.3" y2="938.5" stroke="#ffffff" stroke-width="2.6"/>
<line x1="725.8" y1="942.4" x2="719.8" y2="957.2" stroke="#ffffff" stroke-width="2.6"/>
<line x1="725.8" y1="942.4" x2="715.9" y2="929.8" stroke="#ffffff" stroke-width="2.6"/>
<circle cx="725.8" cy="942.4" r="2.6" fill="#ffffff"/>
<circle cx="835.3" cy="942.4" r="23.6" fill="#ffffff"/>
<circle cx="835.3" cy="942.4" r="14.8" fill="#0465b6"/>
<circle cx="835.3" cy="942.4" r="6.2" fill="#ffffff"/>
<line x1="835.3" y1="942.4" x2="851.0" y2="945.7" stroke="#ffffff" stroke-width="5.2"/>
<line x1="835.3" y1="942.4" x2="824.4" y2="954.1" stroke="#ffffff" stroke-width="5.2"/>
<line x1="835.3" y1="942.4" x2="832.0" y2="926.7" stroke="#ffffff" stroke-width="5.2"/>
<polygon points="719.71,905.57 722.01,900.98 726.03,894.66 730.63,890.86 733.85,891.55 735.23,894.66 733.62,898.68 732.47,903.28 732.01,908.45 729.48,909.71 723.74,909.02 720.06,907.30" fill="#ffffff" />
<ellipse cx="763.39" cy="875.11" rx="10.69" ry="12.41" fill="#ffffff"/>
<polygon points="759.37,883.74 774.31,872.24 781.90,871.09 792.24,870.52 803.74,873.97 812.93,879.14 819.83,884.89 823.85,891.78 825.57,895.46 827.87,892.36 839.37,890.06 858.91,887.76 858.68,890.63 855.46,894.08 854.54,897.53 850.86,899.25 848.56,896.95 839.37,898.10 826.72,900.98 818.68,903.28 809.48,906.72 803.74,910.17 800.86,914.77 798.56,919.37 799.71,923.39 797.99,928.56 795.92,926.49 793.39,927.64 789.94,922.82 786.49,920.52 781.90,919.37 777.30,916.49 774.31,913.85 771.44,912.47 775.46,922.82 780.06,933.16 785.80,942.36 790.98,949.48 791.55,952.93 782.36,953.16 775.46,953.85 766.26,953.85 763.05,951.78 762.24,946.95 763.97,946.03 766.84,950.17 775.46,951.09 774.31,948.33 768.56,940.06 763.97,933.16 757.64,920.75 763.97,914.77 766.49,912.47 760.52,910.17 754.77,907.30 753.05,903.28 748.45,901.21 747.30,896.95 750.75,893.85 752.47,895.46 755.34,893.16 763.97,890.17 774.31,889.02 777.99,889.48 775.46,886.95 768.56,885.80 763.97,889.02 759.37,886.26" fill="#ffffff" />
<polygon points="792.24,893.51 796.84,892.93 802.59,897.53 808.56,901.55 806.03,903.51 799.14,902.82 794.54,898.91" fill="#0465b6" />
<polygon points="820.75,898.91 823.05,892.93 824.66,889.48 828.10,894.66 826.95,898.91" fill="#046fab" />
</g>
<g shape-rendering="crispEdges">
<rect x="465.00" y="319.0" width="45.00" height="16.2" fill="#0561ff"/>
<rect x="509.50" y="319.0" width="43.50" height="16.2" fill="#0571f4"/>
<rect x="552.50" y="319.0" width="43.50" height="16.2" fill="#0581e9"/>
<rect x="595.50" y="319.0" width="43.50" height="16.2" fill="#058fdb"/>
<rect x="638.50" y="319.0" width="43.50" height="16.2" fill="#059ccd"/>
<rect x="681.50" y="319.0" width="43.50" height="16.2" fill="#05a8bc"/>
<rect x="724.50" y="319.0" width="43.50" height="16.2" fill="#05b5ab"/>
<rect x="767.50" y="319.0" width="43.50" height="16.2" fill="#05c298"/>
<rect x="810.50" y="319.0" width="43.50" height="16.2" fill="#05d084"/>
<rect x="853.50" y="319.0" width="43.50" height="16.2" fill="#05dd6d"/>
<rect x="896.50" y="319.0" width="43.50" height="16.2" fill="#05e954"/>
<rect x="939.50" y="319.0" width="43.50" height="16.2" fill="#41f32a"/>
<rect x="982.50" y="319.0" width="43.50" height="16.2" fill="#8cf716"/>
<rect x="1025.50" y="319.0" width="43.50" height="16.2" fill="#bdfb09"/>
<rect x="1068.50" y="319.0" width="43.50" height="16.2" fill="#e9fd05"/>
<rect x="1111.50" y="319.0" width="43.50" height="16.2" fill="#fff710"/>
<rect x="1154.50" y="319.0" width="43.50" height="16.2" fill="#ffe629"/>
<rect x="1197.50" y="319.0" width="43.50" height="16.2" fill="#ffd537"/>
<rect x="1240.50" y="319.0" width="43.50" height="16.2" fill="#ffc337"/>
<rect x="1283.50" y="319.0" width="43.50" height="16.2" fill="#ffb237"/>
<rect x="1326.50" y="319.0" width="43.50" height="16.2" fill="#ffa037"/>
<rect x="1369.50" y="319.0" width="43.50" height="16.2" fill="#ff8d37"/>
<rect x="1412.50" y="319.0" width="43.50" height="16.2" fill="#ff7937"/>
<rect x="1455.50" y="319.0" width="43.50" height="16.2" fill="#fe6237"/>
<rect x="1498.50" y="319.0" width="43.50" height="16.2" fill="#fc4732"/>
<rect x="1541.50" y="319.0" width="43.50" height="16.2" fill="#fb2438"/>
<rect x="1584.50" y="319.0" width="43.50" height="16.2" fill="#ea1747"/>
<rect x="1627.50" y="319.0" width="43.50" height="16.2" fill="#d90a55"/>
<rect x="1670.50" y="319.0" width="43.50" height="16.2" fill="#c40c5f"/>
<rect x="1713.50" y="319.0" width="41.50" height="16.2" fill="#ae0d6a"/>
</g>
<g font-family="Liberation Sans, sans-serif" fill="#2b2b2b" text-anchor="middle">
<rect x="464.6" y="311.2" width="1.7" height="11.3" fill="#333"/>
<text x="464.5" y="303.9" font-size="16px">0.0e+00</text>
<rect x="550.6" y="311.2" width="1.7" height="11.3" fill="#333"/>
<text x="550.5" y="303.9" font-size="16px">2</text>
<rect x="636.6" y="311.2" width="1.7" height="11.3" fill="#333"/>
<text x="636.5" y="303.9" font-size="16px">4</text>
<rect x="722.6" y="311.2" width="1.7" height="11.3" fill="#333"/>
<text x="722.5" y="303.9" font-size="16px">6</text>
<rect x="808.6" y="311.2" width="1.7" height="11.3" fill="#333"/>
<text x="808.5" y="303.9" font-size="16px">8</text>
<rect x="894.6" y="311.2" width="1.7" height="11.3" fill="#333"/>
<text x="894.5" y="303.9" font-size="16px">10</text>
<rect x="980.6" y="311.2" width="1.7" height="11.3" fill="#333"/>
<text x="980.5" y="303.9" font-size="16px">12</text>
<rect x="1066.6" y="311.2" width="1.7" height="11.3" fill="#333"/>
<text x="1066.5" y="303.9" font-size="16px">14</text>
<rect x="1152.6" y="311.2" width="1.7" height="11.3" fill="#333"/>
<text x="1152.5" y="303.9" font-size="16px">16</text>
<rect x="1238.6" y="311.2" width="1.7" height="11.3" fill="#333"/>
<text x="1238.5" y="303.9" font-size="16px">18</text>
<rect x="1324.6" y="311.2" width="1.7" height="11.3" fill="#333"/>
<text x="1324.5" y="303.9" font-size="16px">20</text>
<rect x="1410.6" y="311.2" width="1.7" height="11.3" fill="#333"/>
<text x="1410.5" y="303.9" font-size="16px">22</text>
<rect x="1496.6" y="311.2" width="1.7" height="11.3" fill="#333"/>
<text x="1496.5" y="303.9" font-size="16px">24</text>
<rect x="1582.6" y="311.2" width="1.7" height="11.3" fill="#333"/>
<text x="1582.5" y="303.9" font-size="16px">26</text>
<rect x="1668.6" y="311.2" width="1.7" height="11.3" fill="#333"/>
<text x="1668.5" y="303.9" font-size="16px">28</text>
<rect x="1754.6" y="311.2" width="1.7" height="11.3" fill="#333"/>
<text x="1754.5" y="303.9" font-size="16px">3.0e+01</text>
<text x="1110" y="283.9" font-size="16.6px" letter-spacing="0.45">U Magnitude</text>
</g>
<g>
<rect x="400.8" y="857" width="2.8" height="43" fill="#74a828"/>
<polygon points="402.2,847.5 406.8,858.5 397.6,858.5" fill="#1aa83a"/>
<rect x="404" y="899.3" width="43" height="2.5" fill="#d8521a"/>
<polygon points="453.5,900.6 445.8,896.2 445.8,905" fill="#d8200f"/>
<circle cx="401.4" cy="901.3" r="3.7" fill="#ffee10"/>
<g font-family="Liberation Sans, sans-serif" fill="#1a120a" stroke="#1a120a" stroke-width="0.6">
<text x="404.6" y="858.6" font-size="15.5px">Z</text>
<text x="447.5" y="901.6" font-size="15.5px">X</text>
<text x="404.2" y="901.2" font-size="12.5px" stroke-width="0.35">Y</text>
</g></g>
</svg>
<svg class="abs" style="left:0;top:0" width="1920" height="1001" viewBox="0 0 1920 1001">
<g transform="translate(17.0,51.0)"><path d="M1.5,8.5 Q1.5,6.5 3.5,6.5 H8 L10,9 H20.5 Q22,9 22,10.5 V20 Q22,21.5 20.5,21.5 H3 Q1.5,21.5 1.5,20Z" fill="#f5d365" stroke="#c9a23a" stroke-width="1.3" /><path d="M2,11.5 H21.5" fill="none" stroke="#c9a23a" stroke-width="1" /><path d="M17.5,1 L22,7 H19.3 V11 H15.7 V7 H13Z" fill="#3b8ec6" stroke="#2a6ea3" stroke-width="0.8" /></g>
<g transform="translate(49.0,51.0)"><path d="M1.5,8.5 Q1.5,6.5 3.5,6.5 H8 L10,9 H20.5 Q22,9 22,10.5 V20 Q22,21.5 20.5,21.5 H3 Q1.5,21.5 1.5,20Z" fill="#f5d365" stroke="#c9a23a" stroke-width="1.3" /><path d="M2,11.5 H21.5" fill="none" stroke="#c9a23a" stroke-width="1" /><path d="M15.7,1.5 H19.3 V6 H22 L17.5,12 L13,6 H15.7Z" fill="#a8d08d" stroke="#76a15c" stroke-width="0.9" /></g>
<g transform="translate(81.0,51.0)"><rect x="2" y="14.5" width="20" height="7.5" fill="#c2c2c2" stroke="#8f8f8f" stroke-width="1" rx="1.5" /><rect x="4.5" y="18.5" width="3" height="1.5" fill="#e8e8e8" /><path d="M9,1.5 H15 V8 H19 L12,16.5 L5,8 H9Z" fill="#a8d08d" stroke="#76a15c" stroke-width="1" /></g>
<g transform="translate(112.5,51.0)"><path d="M2,2 h5 M2,2 v5" fill="none" stroke="#4d86b6" stroke-width="2.2" stroke-linecap="round"/><path d="M22,2 h-5 M22,2 v5" fill="none" stroke="#4d86b6" stroke-width="2.2" stroke-linecap="round"/><path d="M2,22 h5 M2,22 v-5" fill="none" stroke="#4d86b6" stroke-width="2.2" stroke-linecap="round"/><path d="M22,22 h-5 M22,22 v-5" fill="none" stroke="#4d86b6" stroke-width="2.2" stroke-linecap="round"/><path d="M6,19 L13,11 L10,8.5 L19,5 L17.5,14.5 L15,12.5 L8.5,20.5Z" fill="#f6b92c" stroke="#c88d1c" stroke-width="0.9" /></g>
<g transform="translate(145.0,51.0)"><path d="M1,12.8 L15.5,3.2 L18.5,0.6 L21.5,3 L19.5,6.8 L14.2,22.3 Q12,24 9.6,21.8Z" fill="#e9f1f8" stroke="#c2d2e0" stroke-width="0.9" /><path d="M2.2,12.8 L7,9.6 L9.4,16.3 L7.4,19Z" fill="#de3429" /><path d="M8.1,8.9 L12.2,6.2 L13.2,20 L10.4,17.2Z" fill="#3c9a4b" /><path d="M13.3,5.5 L18,2.8 L14.8,21.5 L13.9,20.8Z" fill="#2a5fa8" /></g>
<g transform="translate(183.0,51.0)"><path d="M1.5,3.5 l4.6,-2.2 l4.6,2.2 v10.5 l-4.6,2.4 l-4.6,-2.4Z" fill="#c2c2c2" stroke="#8f8f8f" stroke-width="0.9" /><path d="M1.5,3.5 l4.6,2.2 l4.6,-2.2 M6.1,5.7 v10.5" fill="none" stroke="#8f8f8f" stroke-width="0.7" /><path d="M11.5,3.5 l4.6,-2.2 l4.6,2.2 v10.5 l-4.6,2.4 l-4.6,-2.4Z" fill="#c2c2c2" stroke="#8f8f8f" stroke-width="0.9" /><path d="M11.5,3.5 l4.6,2.2 l4.6,-2.2 M16.1,5.7 v10.5" fill="none" stroke="#8f8f8f" stroke-width="0.7" /><path d="M6,17.5 v2.3 h10 v-2.3" fill="none" stroke="#8f8f8f" stroke-width="1" /><path d="M8.8,19.8 l2.3,-2 l2.3,2 l-2.3,2Z" fill="#a8d08d" stroke="#76a15c" stroke-width="0.8" /></g>
<g transform="translate(215.0,51.0)"><path d="M1.5,3.5 l4.6,-2.2 l4.6,2.2 v10.5 l-4.6,2.4 l-4.6,-2.4Z" fill="#c2c2c2" stroke="#8f8f8f" stroke-width="0.9" /><path d="M1.5,3.5 l4.6,2.2 l4.6,-2.2 M6.1,5.7 v10.5" fill="none" stroke="#8f8f8f" stroke-width="0.7" /><path d="M11.5,3.5 l4.6,-2.2 l4.6,2.2 v10.5 l-4.6,2.4 l-4.6,-2.4Z" fill="#c2c2c2" stroke="#8f8f8f" stroke-width="0.9" /><path d="M11.5,3.5 l4.6,2.2 l4.6,-2.2 M16.1,5.7 v10.5" fill="none" stroke="#8f8f8f" stroke-width="0.7" /><path d="M6,17.5 v2.3 h10 v-2.3" fill="none" stroke="#8f8f8f" stroke-width="1" /><circle cx="11.2" cy="20.2" r="2.2" fill="#de3429" /></g>
<g transform="translate(247.0,51.0)"><path d="M4.5,7 A9,9 0 1 1 3,12" fill="none" stroke="#76a15c" stroke-width="4.6" /><path d="M4.5,7 A9,9 0 1 1 3,12" fill="none" stroke="#a8d08d" stroke-width="2.8" /><path d="M1,5 L8,4.5 L6,10.5Z" fill="#a8d08d" stroke="#76a15c" stroke-width="0.8" /><path d="M12,6.5 V12.5" fill="none" stroke="#a58d4f" stroke-width="1.8" /><circle cx="12" cy="12.8" r="1.2" fill="#a58d4f" /></g>
<g transform="translate(285.0,51.0)"><path d="M2,12.5 L9.5,4.5 V9 Q20,8 21,17.5 Q20.5,20.5 17.5,21.5 Q18.5,15 9.5,15.5 V20Z" fill="#de3429" stroke="#b3241c" stroke-width="0.8" /></g>
<g transform="translate(317.0,51.0)"><g transform="translate(24,0) scale(-1,1)"><path d="M2,12.5 L9.5,4.5 V9 Q20,8 21,17.5 Q20.5,20.5 17.5,21.5 Q18.5,15 9.5,15.5 V20Z" fill="#c9c9c9" stroke="#aaaaaa" stroke-width="0.8" /></g></g>
<g transform="translate(354.0,51.0)"><path d="M2,11.25 l6.5,-3.25 l6.5,3.25 l-6.5,3.25Z" fill="#c8c8c8" stroke="#8f8f8f" stroke-width="0.8" /><path d="M2,11.25 l6.5,3.25 v7.15 l-6.5,-3.25Z" fill="#a9a9a9" stroke="#8f8f8f" stroke-width="0.8" /><path d="M8.5,14.5 l6.5,-3.25 v7.15 l-6.5,3.25Z" fill="#bdbdbd" stroke="#8f8f8f" stroke-width="0.8" /><path d="M12,13 L18,6 L15.5,4 L22.5,1.5 L21.5,9.5 L19.5,7.5 L14,14.5Z" fill="#a8d08d" stroke="#76a15c" stroke-width="0.9" /></g>
<g transform="translate(387.0,51.0)"><defs><linearGradient id="gcp" x1="0" y1="0" x2="0" y2="1"><stop offset="0" stop-color="#c6c9c4"/><stop offset="0.45" stop-color="#9eb4c8"/><stop offset="0.6" stop-color="#2f80c8"/><stop offset="1" stop-color="#2242a8"/></linearGradient></defs><rect x="4" y="1.5" width="11" height="18" fill="url(#gcp)" stroke="#8a8a8a" stroke-width="0.8" rx="1" /><path d="M2,8 V21.5 H16" fill="none" stroke="#5b8fc0" stroke-width="1.2" stroke-dasharray="1.6 1.6"/><path d="M15.5,14.5 L21.5,20.5" fill="none" stroke="#444" stroke-width="2" /><path d="M19,7 v1 M21,10 h1 M19.5,13 l1,1" fill="none" stroke="#999" stroke-width="1" /></g>
<g transform="translate(420.0,51.0)"><path d="M10,2.5 Q19,1.5 20.5,8.5 Q21,13 16.5,13 Q13.5,13.5 14.5,16.5 Q15.5,20.5 10.5,20.5 Q2,19.5 2,11 Q2.5,3.5 10,2.5Z" fill="#f3dcae" stroke="#8d8571" stroke-width="1.2" /><circle cx="7" cy="8" r="1.7" fill="#3b8ec6" /><circle cx="12" cy="6" r="1.7" fill="#4c9f45" /><circle cx="6" cy="13.5" r="1.7" fill="#de3429" /><circle cx="9.5" cy="17" r="1.6" fill="#e0702b" /><path d="M21.5,2 L13,17" fill="none" stroke="#8a6a3a" stroke-width="1.8" /><path d="M13.8,15.5 L12,19.5 L15,17.5Z" fill="#555" /><path d="M19.5,21 h4.5 l-2.25,2.8Z" fill="#333" /></g>
<g transform="translate(469.0,51.0)"><rect x="1.2" y="4" width="5.5" height="16.3" fill="#a8d08d" stroke="#76a15c" stroke-width="1" rx="0.8" /><path d="M9,12.2 L21,4 V20.4Z" fill="#a8d08d" stroke="#76a15c" stroke-width="1" stroke-linejoin="round"/></g>
<g transform="translate(500.5,51.0)"><path d="M1.5,12.2 L13,4 V20.4Z" fill="#a8d08d" stroke="#76a15c" stroke-width="1" stroke-linejoin="round"/><rect x="16" y="4" width="5.5" height="16.3" fill="#a8d08d" stroke="#76a15c" stroke-width="1" rx="0.8" /></g>
<g transform="translate(533.0,51.0)"><path d="M4,12.2 L16.5,4 V20.4Z" fill="#a8d08d" stroke="#76a15c" stroke-width="1" stroke-linejoin="round"/></g>
<g transform="translate(565.0,51.0)"><path d="M19.5,12.2 L7.3,4 V20.4Z" fill="#a8d08d" stroke="#76a15c" stroke-width="1" stroke-linejoin="round"/></g>
<g transform="translate(596.5,51.0)"><rect x="2.3" y="4" width="4.8" height="16.3" fill="#a8d08d" stroke="#76a15c" stroke-width="1" rx="0.8" /><path d="M22.5,12.2 L10.5,4 V20.4Z" fill="#a8d08d" stroke="#76a15c" stroke-width="1" stroke-linejoin="round"/></g>
<g transform="translate(628.5,51.0)"><path d="M14.5,12.2 L3,4 V20.4Z" fill="#a8d08d" stroke="#76a15c" stroke-width="1" stroke-linejoin="round"/><rect x="16.2" y="4" width="5.5" height="16.3" fill="#a8d08d" stroke="#76a15c" stroke-width="1" rx="0.8" /></g>
<g transform="translate(660.5,51.0)"><path d="M3,11 V6.5 H15 V3 L21.5,8 L15,12.5 V9.8 H6.5 V11Z" fill="#a8d08d" stroke="#76a15c" stroke-width="1" /><path d="M21,13 V17.5 H9 V21 L2.5,16 L9,11.5 V14.2 H17.5 V13Z" fill="#a8d08d" stroke="#76a15c" stroke-width="1" /></g>
<g transform="translate(881.0,51.0)"><path d="M4.5,5.3 h3.3 l1.2,-1.8 h5 l1.2,1.8 h3.3 q1,0 1,1 v7 q0,1 -1,1 h-14 q-1,0 -1,-1 v-7 q0,-1 1,-1Z" fill="#cfcfcf" stroke="#9c9c9c" stroke-width="0.9" /><circle cx="11.5" cy="10.3" r="3.2" fill="#e4e4e4" stroke="#9c9c9c" stroke-width="1.1" /><circle cx="13" cy="12" r="3.2" fill="#dbe9f4" stroke="#3b8ec6" stroke-width="1.5" /><path d="M15.5,14.5 L19.5,19" fill="none" stroke="#3b8ec6" stroke-width="2.4" stroke-linecap="round"/></g>
<g transform="translate(914.0,51.0)"><path d="M4,5.3 h3.3 l1.2,-1.8 h5 l1.2,1.8 h3.3 q1,0 1,1 v7 q0,1 -1,1 h-14 q-1,0 -1,-1 v-7 q0,-1 1,-1Z" fill="#cfcfcf" stroke="#9c9c9c" stroke-width="0.9" /><circle cx="11" cy="10.3" r="3.2" fill="#e4e4e4" stroke="#9c9c9c" stroke-width="1.1" /><path d="M17.5,13.5 v7 M14,17 h7" fill="none" stroke="#3b8ec6" stroke-width="2.8" /></g>
<g transform="translate(945.0,51.0)"><path d="M4.5,5.3 h3.3 l1.2,-1.8 h5 l1.2,1.8 h3.3 q1,0 1,1 v7 q0,1 -1,1 h-14 q-1,0 -1,-1 v-7 q0,-1 1,-1Z" fill="#cfcfcf" stroke="#9c9c9c" stroke-width="0.9" /><circle cx="11.5" cy="10.3" r="3.2" fill="#e4e4e4" stroke="#9c9c9c" stroke-width="1.1" /><text x="19.5" y="23" font-family="Liberation Sans, sans-serif" font-size="8px" fill="#555" >1</text></g>
<g transform="translate(977.0,51.0)"><path d="M4.5,5.3 h3.3 l1.2,-1.8 h5 l1.2,1.8 h3.3 q1,0 1,1 v7 q0,1 -1,1 h-14 q-1,0 -1,-1 v-7 q0,-1 1,-1Z" fill="#cfcfcf" stroke="#9c9c9c" stroke-width="0.9" /><circle cx="11.5" cy="10.3" r="3.2" fill="#e4e4e4" stroke="#9c9c9c" stroke-width="1.1" /><text x="19.5" y="23" font-family="Liberation Sans, sans-serif" font-size="8px" fill="#555" >2</text></g>
<g transform="translate(1009.0,51.0)"><path d="M4.5,5.3 h3.3 l1.2,-1.8 h5 l1.2,1.8 h3.3 q1,0 1,1 v7 q0,1 -1,1 h-14 q-1,0 -1,-1 v-7 q0,-1 1,-1Z" fill="#cfcfcf" stroke="#9c9c9c" stroke-width="0.9" /><circle cx="11.5" cy="10.3" r="3.2" fill="#e4e4e4" stroke="#9c9c9c" stroke-width="1.1" /><text x="19.5" y="23" font-family="Liberation Sans, sans-serif" font-size="8px" fill="#555" >3</text></g>
<g transform="translate(1041.0,51.0)"><path d="M4.5,5.3 h3.3 l1.2,-1.8 h5 l1.2,1.8 h3.3 q1,0 1,1 v7 q0,1 -1,1 h-14 q-1,0 -1,-1 v-7 q0,-1 1,-1Z" fill="#cfcfcf" stroke="#9c9c9c" stroke-width="0.9" /><circle cx="11.5" cy="10.3" r="3.2" fill="#e4e4e4" stroke="#9c9c9c" stroke-width="1.1" /><text x="19.5" y="23" font-family="Liberation Sans, sans-serif" font-size="8px" fill="#555" >4</text></g>
<g transform="translate(1073.0,51.0)"><path d="M4.5,5.3 h3.3 l1.2,-1.8 h5 l1.2,1.8 h3.3 q1,0 1,1 v7 q0,1 -1,1 h-14 q-1,0 -1,-1 v-7 q0,-1 1,-1Z" fill="#cfcfcf" stroke="#9c9c9c" stroke-width="0.9" /><circle cx="11.5" cy="10.3" r="3.2" fill="#e4e4e4" stroke="#9c9c9c" stroke-width="1.1" /><text x="19.5" y="23" font-family="Liberation Sans, sans-serif" font-size="8px" fill="#555" >5</text></g>
<rect x="175.5" y="52" width="1" height="23" fill="#d9d9d9" />
<rect x="278" y="52" width="1" height="23" fill="#d9d9d9" />
<rect x="347" y="52" width="1" height="23" fill="#d9d9d9" />
<rect x="4" y="51.5" width="1" height="1" fill="#cfcfcf" /><rect x="7" y="51.5" width="1" height="1" fill="#cfcfcf" /><rect x="4" y="54.5" width="1" height="1" fill="#cfcfcf" /><rect x="7" y="54.5" width="1" height="1" fill="#cfcfcf" /><rect x="4" y="57.5" width="1" height="1" fill="#cfcfcf" /><rect x="7" y="57.5" width="1" height="1" fill="#cfcfcf" /><rect x="4" y="60.5" width="1" height="1" fill="#cfcfcf" /><rect x="7" y="60.5" width="1" height="1" fill="#cfcfcf" /><rect x="4" y="63.5" width="1" height="1" fill="#cfcfcf" /><rect x="7" y="63.5" width="1" height="1" fill="#cfcfcf" /><rect x="4" y="66.5" width="1" height="1" fill="#cfcfcf" /><rect x="7" y="66.5" width="1" height="1" fill="#cfcfcf" /><rect x="4" y="69.5" width="1" height="1" fill="#cfcfcf" /><rect x="7" y="69.5" width="1" height="1" fill="#cfcfcf" /><rect x="4" y="72.5" width="1" height="1" fill="#cfcfcf" /><rect x="7" y="72.5" width="1" height="1" fill="#cfcfcf" />
<rect x="455.5" y="51.5" width="1" height="1" fill="#cfcfcf" /><rect x="458.5" y="51.5" width="1" height="1" fill="#cfcfcf" /><rect x="455.5" y="54.5" width="1" height="1" fill="#cfcfcf" /><rect x="458.5" y="54.5" width="1" height="1" fill="#cfcfcf" /><rect x="455.5" y="57.5" width="1" height="1" fill="#cfcfcf" /><rect x="458.5" y="57.5" width="1" height="1" fill="#cfcfcf" /><rect x="455.5" y="60.5" width="1" height="1" fill="#cfcfcf" /><rect x="458.5" y="60.5" width="1" height="1" fill="#cfcfcf" /><rect x="455.5" y="63.5" width="1" height="1" fill="#cfcfcf" /><rect x="458.5" y="63.5" width="1" height="1" fill="#cfcfcf" /><rect x="455.5" y="66.5" width="1" height="1" fill="#cfcfcf" /><rect x="458.5" y="66.5" width="1" height="1" fill="#cfcfcf" /><rect x="455.5" y="69.5" width="1" height="1" fill="#cfcfcf" /><rect x="458.5" y="69.5" width="1" height="1" fill="#cfcfcf" /><rect x="455.5" y="72.5" width="1" height="1" fill="#cfcfcf" /><rect x="458.5" y="72.5" width="1" height="1" fill="#cfcfcf" />
<rect x="696" y="51.5" width="1" height="1" fill="#cfcfcf" /><rect x="699" y="51.5" width="1" height="1" fill="#cfcfcf" /><rect x="696" y="54.5" width="1" height="1" fill="#cfcfcf" /><rect x="699" y="54.5" width="1" height="1" fill="#cfcfcf" /><rect x="696" y="57.5" width="1" height="1" fill="#cfcfcf" /><rect x="699" y="57.5" width="1" height="1" fill="#cfcfcf" /><rect x="696" y="60.5" width="1" height="1" fill="#cfcfcf" /><rect x="699" y="60.5" width="1" height="1" fill="#cfcfcf" /><rect x="696" y="63.5" width="1" height="1" fill="#cfcfcf" /><rect x="699" y="63.5" width="1" height="1" fill="#cfcfcf" /><rect x="696" y="66.5" width="1" height="1" fill="#cfcfcf" /><rect x="699" y="66.5" width="1" height="1" fill="#cfcfcf" /><rect x="696" y="69.5" width="1" height="1" fill="#cfcfcf" /><rect x="699" y="69.5" width="1" height="1" fill="#cfcfcf" /><rect x="696" y="72.5" width="1" height="1" fill="#cfcfcf" /><rect x="699" y="72.5" width="1" height="1" fill="#cfcfcf" />
<rect x="869" y="51.5" width="1" height="1" fill="#cfcfcf" /><rect x="872" y="51.5" width="1" height="1" fill="#cfcfcf" /><rect x="869" y="54.5" width="1" height="1" fill="#cfcfcf" /><rect x="872" y="54.5" width="1" height="1" fill="#cfcfcf" /><rect x="869" y="57.5" width="1" height="1" fill="#cfcfcf" /><rect x="872" y="57.5" width="1" height="1" fill="#cfcfcf" /><rect x="869" y="60.5" width="1" height="1" fill="#cfcfcf" /><rect x="872" y="60.5" width="1" height="1" fill="#cfcfcf" /><rect x="869" y="63.5" width="1" height="1" fill="#cfcfcf" /><rect x="872" y="63.5" width="1" height="1" fill="#cfcfcf" /><rect x="869" y="66.5" width="1" height="1" fill="#cfcfcf" /><rect x="872" y="66.5" width="1" height="1" fill="#cfcfcf" /><rect x="869" y="69.5" width="1" height="1" fill="#cfcfcf" /><rect x="872" y="69.5" width="1" height="1" fill="#cfcfcf" /><rect x="869" y="72.5" width="1" height="1" fill="#cfcfcf" /><rect x="872" y="72.5" width="1" height="1" fill="#cfcfcf" />
<defs><linearGradient id="gcb" x1="0" y1="0" x2="0" y2="1"><stop offset="0" stop-color="#e9a63a"/><stop offset="0.3" stop-color="#d9c04a"/><stop offset="0.55" stop-color="#2fa6a0"/><stop offset="0.8" stop-color="#2f7fc8"/><stop offset="1" stop-color="#6a5a9a"/></linearGradient></defs>
<g transform="translate(17.0,90.0)"><rect x="7" y="1.5" width="10.5" height="20.5" fill="url(#gcb)" stroke="#8f8f8f" stroke-width="0.8" rx="1" /></g>
<g transform="translate(49.0,90.0)"><rect x="11" y="10.5" width="5.5" height="5" fill="#d9b64a" stroke="#a98a3a" stroke-width="0.6" /><rect x="16.5" y="10.5" width="5.5" height="5" fill="#e3c452" stroke="#a98a3a" stroke-width="0.6" /><rect x="11" y="15.5" width="5.5" height="5.5" fill="#3f9aa0" stroke="#3a7a80" stroke-width="0.6" /><rect x="16.5" y="15.5" width="5.5" height="5.5" fill="#c9b04a" stroke="#a98a3a" stroke-width="0.6" /><rect x="5" y="14.5" width="6" height="6.5" fill="#2f7fc0" stroke="#2a5f90" stroke-width="0.6" /><circle cx="8.5" cy="8" r="6.3" fill="#a8d08d" stroke="#76a15c" stroke-width="1.1" /></g>
<g transform="translate(81.0,90.0)"><rect x="11" y="10.5" width="5.5" height="5" fill="#d9b64a" stroke="#a98a3a" stroke-width="0.6" /><rect x="16.5" y="10.5" width="5.5" height="5" fill="#e3c452" stroke="#a98a3a" stroke-width="0.6" /><rect x="11" y="15.5" width="5.5" height="5.5" fill="#3f9aa0" stroke="#3a7a80" stroke-width="0.6" /><rect x="16.5" y="15.5" width="5.5" height="5.5" fill="#c9b04a" stroke="#a98a3a" stroke-width="0.6" /><rect x="5" y="14.5" width="6" height="6.5" fill="#2f7fc0" stroke="#2a5f90" stroke-width="0.6" /><path d="M8,9 a3.6,3.6 0 1 1 5,4.5" fill="none" stroke="#222" stroke-width="2.6" stroke-linecap="round"/><path d="M10.5,12.5 a3.6,3.6 0 1 1 -5.5,3.5" fill="none" stroke="#1f5f90" stroke-width="2.6" stroke-linecap="round"/><path d="M3,5 l1.5,1.5 M6,3 l0.5,2 M2,8.5 l2,0.3" fill="none" stroke="#555" stroke-width="0.9" /></g>
<g transform="translate(112.5,90.0)"><path d="M1.5,7.5 L7,2.5 V5.5 H17 V2.5 L22.5,7.5 L17,12.5 V9.5 H7 V12.5Z" fill="#a8d08d" stroke="#76a15c" stroke-width="1" /><path d="M1.5,18.5 H22.5 M1.5,15.5 V21.5 M22.5,15.5 V21.5 M6.7,16.5 v4 M12,16.5 v4 M17.2,16.5 v4" fill="none" stroke="#8a8a8a" stroke-width="1" /></g>
<g transform="translate(145.0,90.0)"><path d="M1.5,7.5 L7,2.5 V5.5 H17 V2.5 L22.5,7.5 L17,12.5 V9.5 H7 V12.5Z" fill="#a8d08d" stroke="#76a15c" stroke-width="1" /><path d="M1.5,18.5 H22.5 M1.5,15.5 V21.5 M22.5,15.5 V21.5 M6.7,16.5 v4 M12,16.5 v4 M17.2,16.5 v4" fill="none" stroke="#8a8a8a" stroke-width="1" /><text x="15" y="22.5" font-family="Liberation Sans, sans-serif" font-size="13px" font-weight="bold" fill="#111" >c</text></g>
<g transform="translate(177.0,90.0)"><path d="M1.5,7.5 L7,2.5 V5.5 H17 V2.5 L22.5,7.5 L17,12.5 V9.5 H7 V12.5Z" fill="#a8d08d" stroke="#76a15c" stroke-width="1" /><path d="M1.5,18.5 H22.5 M1.5,15.5 V21.5 M22.5,15.5 V21.5 M6.7,16.5 v4 M12,16.5 v4 M17.2,16.5 v4" fill="none" stroke="#8a8a8a" stroke-width="1" /><text x="17" y="22.5" font-family="Liberation Sans, sans-serif" font-size="13px" font-weight="bold" fill="#111" >t</text></g>
<g transform="translate(209.0,90.0)"><path d="M1.5,7.5 L7,2.5 V5.5 H17 V2.5 L22.5,7.5 L17,12.5 V9.5 H7 V12.5Z" fill="#a8d08d" stroke="#76a15c" stroke-width="1" /><path d="M1.5,18.5 H22.5 M1.5,15.5 V21.5 M22.5,15.5 V21.5 M6.7,16.5 v4 M12,16.5 v4 M17.2,16.5 v4" fill="none" stroke="#8a8a8a" stroke-width="1" /><path d="M13,18.5 Q17.5,14 22.5,18.5 Q17.5,22.5 13,18.5Z" fill="#111" /><circle cx="18.5" cy="18" r="1.2" fill="#ccc" /></g>
<g transform="translate(652.0,90.0)"><path d="M4,4 L20,20 M20,4 L4,20" fill="none" stroke="#6f675f" stroke-width="1.6" /><g transform="translate(2.5,2.5) rotate(-45)"><path d="M0,-1 L4,5.5 L0,4.3 L-4,5.5Z" fill="#a8d08d" stroke="#76a15c" stroke-width="0.9" /></g><g transform="translate(21.5,2.5) rotate(45)"><path d="M0,-1 L4,5.5 L0,4.3 L-4,5.5Z" fill="#a8d08d" stroke="#76a15c" stroke-width="0.9" /></g><g transform="translate(21.5,21.5) rotate(135)"><path d="M0,-1 L4,5.5 L0,4.3 L-4,5.5Z" fill="#a8d08d" stroke="#76a15c" stroke-width="0.9" /></g><g transform="translate(2.5,21.5) rotate(225)"><path d="M0,-1 L4,5.5 L0,4.3 L-4,5.5Z" fill="#a8d08d" stroke="#76a15c" stroke-width="0.9" /></g></g>
<g transform="translate(684.0,90.0)"><g transform="translate(5,5) rotate(135) scale(0.75)"><path d="M0,-1 L4,5.5 L0,4.3 L-4,5.5Z" fill="#d4d4d4" stroke="#9a9a9a" stroke-width="1" /></g><g transform="translate(19,5) rotate(225) scale(0.75)"><path d="M0,-1 L4,5.5 L0,4.3 L-4,5.5Z" fill="#d4d4d4" stroke="#9a9a9a" stroke-width="1" /></g><g transform="translate(19,19) rotate(-45) scale(0.75)"><path d="M0,-1 L4,5.5 L0,4.3 L-4,5.5Z" fill="#d4d4d4" stroke="#9a9a9a" stroke-width="1" /></g><g transform="translate(5,19) rotate(45) scale(0.75)"><path d="M0,-1 L4,5.5 L0,4.3 L-4,5.5Z" fill="#d4d4d4" stroke="#9a9a9a" stroke-width="1" /></g><circle cx="12" cy="12" r="3.2" fill="#b4b4b4" /></g>
<g transform="translate(716.0,90.0)"><circle cx="12" cy="12" r="10.8" fill="#2e8fc4" stroke="#2778a8" stroke-width="0.8" /><g transform="translate(7.5,7.5) rotate(135) scale(0.55)"><path d="M0,-3 L4,4 L-4,4Z" fill="#b5d78a" /></g><g transform="translate(16.5,7.5) rotate(225) scale(0.55)"><path d="M0,-3 L4,4 L-4,4Z" fill="#b5d78a" /></g><g transform="translate(16.5,16.5) rotate(-45) scale(0.55)"><path d="M0,-3 L4,4 L-4,4Z" fill="#b5d78a" /></g><g transform="translate(7.5,16.5) rotate(45) scale(0.55)"><path d="M0,-3 L4,4 L-4,4Z" fill="#b5d78a" /></g><circle cx="12" cy="12" r="1.8" fill="#3f78a8" /></g>
<g transform="translate(748.0,90.0)"><rect x="2.5" y="3" width="19" height="18" fill="#a9a9a9" stroke="#8d8d8d" stroke-width="1" stroke-dasharray="2 1.5"/></g>
<g transform="translate(780.0,90.0)"><path d="M3,15 V2.5 H19 V6" fill="none" stroke="#8a8a8a" stroke-width="1.3" stroke-dasharray="3.5 2.5"/><circle cx="14" cy="13" r="5.3" fill="#d8e9f7" stroke="#9aa6b0" stroke-width="1.6" /><path d="M18,17 L22,21.5" fill="none" stroke="#9aa6b0" stroke-width="2.6" stroke-linecap="round"/></g>
<g transform="translate(812.0,90.0)"><path d="M16.8,17 V7 H14.5 L18.5,1.5 L22.5,7 H20.2 V17Z" fill="#a8d08d" stroke="#76a15c" stroke-width="0.7" /><path d="M18.5,16.8 H7 V14.5 L2,18.5 L7,22.5 V20.2 H18.5Z" fill="#f0bd2a" stroke="#b98c1a" stroke-width="0.7" /><rect x="15.2" y="15.2" width="6.6" height="6.6" fill="#d8382c" stroke="#a82a20" stroke-width="0.7" /><text x="3.5" y="11" font-family="Liberation Sans, sans-serif" font-size="9px" font-weight="bold" fill="#666" >+X</text></g>
<g transform="translate(844.0,90.0)"><path d="M3.8,17 V7 H1.5 L5.5,1.5 L9.5,7 H7.2 V17Z" fill="#a8d08d" stroke="#76a15c" stroke-width="0.7" /><path d="M5.5,16.8 H17 V14.5 L22,18.5 L17,22.5 V20.2 H5.5Z" fill="#f0bd2a" stroke="#b98c1a" stroke-width="0.7" /><rect x="2.2" y="15.2" width="6.6" height="6.6" fill="#d8382c" stroke="#a82a20" stroke-width="0.7" /><text x="11.5" y="11" font-family="Liberation Sans, sans-serif" font-size="9px" font-weight="bold" fill="#666" >-X</text></g>
<g transform="translate(876.0,90.0)"><path d="M3.8,17 V7 H1.5 L5.5,1.5 L9.5,7 H7.2 V17Z" fill="#a8d08d" stroke="#76a15c" stroke-width="0.7" /><path d="M5.5,16.8 H17 V14.5 L22,18.5 L17,22.5 V20.2 H5.5Z" fill="#d8382c" stroke="#a82a20" stroke-width="0.7" /><rect x="2.2" y="15.2" width="6.6" height="6.6" fill="#f0bd2a" stroke="#b98c1a" stroke-width="0.7" /><text x="10.5" y="11" font-family="Liberation Sans, sans-serif" font-size="9px" font-weight="bold" fill="#666" >+Y</text></g>
<g transform="translate(908.0,90.0)"><path d="M16.8,17 V7 H14.5 L18.5,1.5 L22.5,7 H20.2 V17Z" fill="#a8d08d" stroke="#76a15c" stroke-width="0.7" /><path d="M18.5,16.8 H7 V14.5 L2,18.5 L7,22.5 V20.2 H18.5Z" fill="#d8382c" stroke="#a82a20" stroke-width="0.7" /><rect x="15.2" y="15.2" width="6.6" height="6.6" fill="#f0bd2a" stroke="#b98c1a" stroke-width="0.7" /><text x="3.5" y="11" font-family="Liberation Sans, sans-serif" font-size="9px" font-weight="bold" fill="#666" >-Y</text></g>
<g transform="translate(940.0,90.0)"><path d="M16.8,17 V7 H14.5 L18.5,1.5 L22.5,7 H20.2 V17Z" fill="#f0bd2a" stroke="#b98c1a" stroke-width="0.7" /><path d="M18.5,16.8 H7 V14.5 L2,18.5 L7,22.5 V20.2 H18.5Z" fill="#d8382c" stroke="#a82a20" stroke-width="0.7" /><rect x="15.2" y="15.2" width="6.6" height="6.6" fill="#a8d08d" stroke="#76a15c" stroke-width="0.7" /><text x="3.5" y="11" font-family="Liberation Sans, sans-serif" font-size="9px" font-weight="bold" fill="#666" >+Z</text></g>
<g transform="translate(972.0,90.0)"><path d="M3.8,17 V7 H1.5 L5.5,1.5 L9.5,7 H7.2 V17Z" fill="#f0bd2a" stroke="#b98c1a" stroke-width="0.7" /><path d="M5.5,16.8 H17 V14.5 L22,18.5 L17,22.5 V20.2 H5.5Z" fill="#d8382c" stroke="#a82a20" stroke-width="0.7" /><rect x="2.2" y="15.2" width="6.6" height="6.6" fill="#a8d08d" stroke="#76a15c" stroke-width="0.7" /><text x="12" y="11" font-family="Liberation Sans, sans-serif" font-size="9px" font-weight="bold" fill="#666" >-Z</text></g>
<g transform="translate(1004.0,90.0)"><path d="M10.3,14 V6.5 H8 L12,1 L16,6.5 H13.7 V14Z" fill="#f0bd2a" stroke="#b98c1a" stroke-width="0.7" /><g transform="rotate(120 12 14)"><path d="M10.3,14 V7.5 H8 L12,2 L16,7.5 H13.7 V14Z" fill="#d8382c" stroke="#a82a20" stroke-width="0.7" /></g><g transform="rotate(240 12 14)"><path d="M10.3,14 V7.5 H8 L12,2 L16,7.5 H13.7 V14Z" fill="#a8d08d" stroke="#76a15c" stroke-width="0.7" /></g><circle cx="12" cy="10.5" r="1" fill="#d8382c" /><circle cx="12" cy="7.5" r="0.9" fill="#d8382c" /></g>
<g transform="translate(1117.0,90.0)"><path d="M6,19 V6" fill="none" stroke="#e8c24a" stroke-width="2.4" /><path d="M6,2.5 l2.5,4 h-5Z" fill="#e8c24a" /><path d="M7,14 H17" fill="none" stroke="#d8553a" stroke-width="2.4" /><path d="M20.5,14 l-4,2.5 v-5Z" fill="#d8553a" /><path d="M6,15 L3,20" fill="none" stroke="#8fbf73" stroke-width="2.4" /><rect x="1.5" y="18" width="4" height="4" fill="#8fbf73" /><path d="M10,6 Q15,1 21,6 Q15,10.5 10,6Z" fill="#e9e9f4" stroke="#7a7a9a" stroke-width="0.7" /><circle cx="15.5" cy="5.7" r="2.2" fill="#3a3a8a" /></g>
<g transform="translate(1149.0,90.0)"><path d="M19.5,5.5 A9.3,9.3 0 1 0 21.3,12" fill="none" stroke="#76a15c" stroke-width="4.8" /><path d="M19.5,5.5 A9.3,9.3 0 1 0 21.3,12" fill="none" stroke="#a8d08d" stroke-width="3.2" /><path d="M16,2 H22.5 V9Z" fill="#a8d08d" stroke="#76a15c" stroke-width="0.8" /><circle cx="11.5" cy="12" r="3.2" fill="#f0c63a" stroke="#c9a030" stroke-width="0.8" /></g>
<g transform="translate(1181.0,90.0)"><path d="M19.5,5.5 A9.3,9.3 0 1 0 21.3,12" fill="none" stroke="#76a15c" stroke-width="4.8" /><path d="M19.5,5.5 A9.3,9.3 0 1 0 21.3,12" fill="none" stroke="#a8d08d" stroke-width="3.2" /><path d="M16,2 H22.5 V9Z" fill="#a8d08d" stroke="#76a15c" stroke-width="0.8" /><path d="M11.5,7.5 L15.5,12 L11.5,16.5 L7.5,12Z" fill="#f0c63a" stroke="#c9a030" stroke-width="0.8" /></g>
<g transform="translate(1213.0,90.0)"><path d="M19.5,5.5 A9.3,9.3 0 1 0 21.3,12" fill="none" stroke="#76a15c" stroke-width="4.8" /><path d="M19.5,5.5 A9.3,9.3 0 1 0 21.3,12" fill="none" stroke="#a8d08d" stroke-width="3.2" /><path d="M16,2 H22.5 V9Z" fill="#a8d08d" stroke="#76a15c" stroke-width="0.8" /><path d="M14.5,14 L22,17.5 L19,18.5 L21.5,22 L20,23 L17.5,19.5 L15.5,21.5Z" fill="#222" /></g>
<g transform="translate(1262.0,90.0)"><path d="M12,3.2 Q18.2,3.5 18.2,9.5 Q18,12.5 15.5,15.5 V18.3 H8.5 V15.5 Q6,12.5 5.8,9.5 Q5.8,3.5 12,3.2Z" fill="#f8c81e" stroke="#d9a81a" stroke-width="0.8" /><path d="M9,19.8 H15 M9.8,21.5 H14.2" fill="none" stroke="#b0b0b0" stroke-width="1.2" /><path d="M10.5,8 L12,11 L13.5,8" fill="none" stroke="#e0a81a" stroke-width="0.9" /><path d="M12,0 L12,1.8" fill="none" stroke="#bcbcbc" stroke-width="1" /><path d="M4,3 L5.3,4.3" fill="none" stroke="#bcbcbc" stroke-width="1" /><path d="M20,3 L18.7,4.3" fill="none" stroke="#bcbcbc" stroke-width="1" /><path d="M1.5,10 L3.3,10" fill="none" stroke="#bcbcbc" stroke-width="1" /><path d="M22.5,10 L20.7,10" fill="none" stroke="#bcbcbc" stroke-width="1" /><path d="M4.5,16.5 L5.8,15.3" fill="none" stroke="#bcbcbc" stroke-width="1" /><path d="M19.5,16.5 L18.2,15.3" fill="none" stroke="#bcbcbc" stroke-width="1" /></g>
<g transform="translate(1036.0,90.0)"><path d="M12.5,15.3 A6.2,6.2 0 1 1 16.2,8.5" fill="none" stroke="#76a15c" stroke-width="4.4" /><path d="M12.5,15.3 A6.2,6.2 0 1 1 16.2,8.5" fill="none" stroke="#a8d08d" stroke-width="2.8" /><path d="M12.3,7.2 L20.3,6.2 L17,13Z" fill="#a8d08d" stroke="#76a15c" stroke-width="0.8" /><text x="8.5" y="23.5" font-family="Liberation Sans, sans-serif" font-size="9.5px" font-weight="bold" fill="#6c6c6c" >+90</text></g>
<g transform="translate(1068.0,90.0)"><path d="M11.5,15.3 A6.2,6.2 0 1 0 7.8,8.5" fill="none" stroke="#76a15c" stroke-width="4.4" /><path d="M11.5,15.3 A6.2,6.2 0 1 0 7.8,8.5" fill="none" stroke="#a8d08d" stroke-width="2.8" /><path d="M11.7,7.2 L3.7,6.2 L7,13Z" fill="#a8d08d" stroke="#76a15c" stroke-width="0.8" /><text x="-1" y="23.5" font-family="Liberation Sans, sans-serif" font-size="9.5px" font-weight="bold" fill="#6c6c6c" >-90</text></g>
<rect x="4" y="90.5" width="1" height="1" fill="#cfcfcf" /><rect x="7" y="90.5" width="1" height="1" fill="#cfcfcf" /><rect x="4" y="93.5" width="1" height="1" fill="#cfcfcf" /><rect x="7" y="93.5" width="1" height="1" fill="#cfcfcf" /><rect x="4" y="96.5" width="1" height="1" fill="#cfcfcf" /><rect x="7" y="96.5" width="1" height="1" fill="#cfcfcf" /><rect x="4" y="99.5" width="1" height="1" fill="#cfcfcf" /><rect x="7" y="99.5" width="1" height="1" fill="#cfcfcf" /><rect x="4" y="102.5" width="1" height="1" fill="#cfcfcf" /><rect x="7" y="102.5" width="1" height="1" fill="#cfcfcf" /><rect x="4" y="105.5" width="1" height="1" fill="#cfcfcf" /><rect x="7" y="105.5" width="1" height="1" fill="#cfcfcf" /><rect x="4" y="108.5" width="1" height="1" fill="#cfcfcf" /><rect x="7" y="108.5" width="1" height="1" fill="#cfcfcf" /><rect x="4" y="111.5" width="1" height="1" fill="#cfcfcf" /><rect x="7" y="111.5" width="1" height="1" fill="#cfcfcf" />
<rect x="472.5" y="90.5" width="1" height="1" fill="#cfcfcf" /><rect x="475.5" y="90.5" width="1" height="1" fill="#cfcfcf" /><rect x="472.5" y="93.5" width="1" height="1" fill="#cfcfcf" /><rect x="475.5" y="93.5" width="1" height="1" fill="#cfcfcf" /><rect x="472.5" y="96.5" width="1" height="1" fill="#cfcfcf" /><rect x="475.5" y="96.5" width="1" height="1" fill="#cfcfcf" /><rect x="472.5" y="99.5" width="1" height="1" fill="#cfcfcf" /><rect x="475.5" y="99.5" width="1" height="1" fill="#cfcfcf" /><rect x="472.5" y="102.5" width="1" height="1" fill="#cfcfcf" /><rect x="475.5" y="102.5" width="1" height="1" fill="#cfcfcf" /><rect x="472.5" y="105.5" width="1" height="1" fill="#cfcfcf" /><rect x="475.5" y="105.5" width="1" height="1" fill="#cfcfcf" /><rect x="472.5" y="108.5" width="1" height="1" fill="#cfcfcf" /><rect x="475.5" y="108.5" width="1" height="1" fill="#cfcfcf" /><rect x="472.5" y="111.5" width="1" height="1" fill="#cfcfcf" /><rect x="475.5" y="111.5" width="1" height="1" fill="#cfcfcf" />
<rect x="641" y="90.5" width="1" height="1" fill="#cfcfcf" /><rect x="644" y="90.5" width="1" height="1" fill="#cfcfcf" /><rect x="641" y="93.5" width="1" height="1" fill="#cfcfcf" /><rect x="644" y="93.5" width="1" height="1" fill="#cfcfcf" /><rect x="641" y="96.5" width="1" height="1" fill="#cfcfcf" /><rect x="644" y="96.5" width="1" height="1" fill="#cfcfcf" /><rect x="641" y="99.5" width="1" height="1" fill="#cfcfcf" /><rect x="644" y="99.5" width="1" height="1" fill="#cfcfcf" /><rect x="641" y="102.5" width="1" height="1" fill="#cfcfcf" /><rect x="644" y="102.5" width="1" height="1" fill="#cfcfcf" /><rect x="641" y="105.5" width="1" height="1" fill="#cfcfcf" /><rect x="644" y="105.5" width="1" height="1" fill="#cfcfcf" /><rect x="641" y="108.5" width="1" height="1" fill="#cfcfcf" /><rect x="644" y="108.5" width="1" height="1" fill="#cfcfcf" /><rect x="641" y="111.5" width="1" height="1" fill="#cfcfcf" /><rect x="644" y="111.5" width="1" height="1" fill="#cfcfcf" />
<rect x="1106" y="90.5" width="1" height="1" fill="#cfcfcf" /><rect x="1109" y="90.5" width="1" height="1" fill="#cfcfcf" /><rect x="1106" y="93.5" width="1" height="1" fill="#cfcfcf" /><rect x="1109" y="93.5" width="1" height="1" fill="#cfcfcf" /><rect x="1106" y="96.5" width="1" height="1" fill="#cfcfcf" /><rect x="1109" y="96.5" width="1" height="1" fill="#cfcfcf" /><rect x="1106" y="99.5" width="1" height="1" fill="#cfcfcf" /><rect x="1109" y="99.5" width="1" height="1" fill="#cfcfcf" /><rect x="1106" y="102.5" width="1" height="1" fill="#cfcfcf" /><rect x="1109" y="102.5" width="1" height="1" fill="#cfcfcf" /><rect x="1106" y="105.5" width="1" height="1" fill="#cfcfcf" /><rect x="1109" y="105.5" width="1" height="1" fill="#cfcfcf" /><rect x="1106" y="108.5" width="1" height="1" fill="#cfcfcf" /><rect x="1109" y="108.5" width="1" height="1" fill="#cfcfcf" /><rect x="1106" y="111.5" width="1" height="1" fill="#cfcfcf" /><rect x="1109" y="111.5" width="1" height="1" fill="#cfcfcf" />
<rect x="1250" y="90.5" width="1" height="1" fill="#cfcfcf" /><rect x="1253" y="90.5" width="1" height="1" fill="#cfcfcf" /><rect x="1250" y="93.5" width="1" height="1" fill="#cfcfcf" /><rect x="1253" y="93.5" width="1" height="1" fill="#cfcfcf" /><rect x="1250" y="96.5" width="1" height="1" fill="#cfcfcf" /><rect x="1253" y="96.5" width="1" height="1" fill="#cfcfcf" /><rect x="1250" y="99.5" width="1" height="1" fill="#cfcfcf" /><rect x="1253" y="99.5" width="1" height="1" fill="#cfcfcf" /><rect x="1250" y="102.5" width="1" height="1" fill="#cfcfcf" /><rect x="1253" y="102.5" width="1" height="1" fill="#cfcfcf" /><rect x="1250" y="105.5" width="1" height="1" fill="#cfcfcf" /><rect x="1253" y="105.5" width="1" height="1" fill="#cfcfcf" /><rect x="1250" y="108.5" width="1" height="1" fill="#cfcfcf" /><rect x="1253" y="108.5" width="1" height="1" fill="#cfcfcf" /><rect x="1250" y="111.5" width="1" height="1" fill="#cfcfcf" /><rect x="1253" y="111.5" width="1" height="1" fill="#cfcfcf" />
<rect x="1301" y="90.5" width="1" height="1" fill="#cfcfcf" /><rect x="1304" y="90.5" width="1" height="1" fill="#cfcfcf" /><rect x="1301" y="93.5" width="1" height="1" fill="#cfcfcf" /><rect x="1304" y="93.5" width="1" height="1" fill="#cfcfcf" /><rect x="1301" y="96.5" width="1" height="1" fill="#cfcfcf" /><rect x="1304" y="96.5" width="1" height="1" fill="#cfcfcf" /><rect x="1301" y="99.5" width="1" height="1" fill="#cfcfcf" /><rect x="1304" y="99.5" width="1" height="1" fill="#cfcfcf" /><rect x="1301" y="102.5" width="1" height="1" fill="#cfcfcf" /><rect x="1304" y="102.5" width="1" height="1" fill="#cfcfcf" /><rect x="1301" y="105.5" width="1" height="1" fill="#cfcfcf" /><rect x="1304" y="105.5" width="1" height="1" fill="#cfcfcf" /><rect x="1301" y="108.5" width="1" height="1" fill="#cfcfcf" /><rect x="1304" y="108.5" width="1" height="1" fill="#cfcfcf" /><rect x="1301" y="111.5" width="1" height="1" fill="#cfcfcf" /><rect x="1304" y="111.5" width="1" height="1" fill="#cfcfcf" />
<g transform="translate(17.0,129.0)"><rect x="3.5" y="2" width="17" height="20.5" fill="#c9c9c9" stroke="#9a9a9a" stroke-width="1" rx="2.2" /><rect x="6" y="4.5" width="12" height="4.2" fill="#cfe3f2" stroke="#9ab0c2" stroke-width="0.6" rx="0.8" /><rect x="6.3" y="11" width="2.6" height="2.4" fill="#555" rx="0.5" /><rect x="10.7" y="11" width="2.6" height="2.4" fill="#555" rx="0.5" /><rect x="15.1" y="11" width="2.6" height="2.4" fill="#555" rx="0.5" /><rect x="6.3" y="14.7" width="2.6" height="2.4" fill="#555" rx="0.5" /><rect x="10.7" y="14.7" width="2.6" height="2.4" fill="#555" rx="0.5" /><rect x="15.1" y="14.7" width="2.6" height="2.4" fill="#555" rx="0.5" /><rect x="6.3" y="18.4" width="2.6" height="2.4" fill="#555" rx="0.5" /><rect x="10.7" y="18.4" width="2.6" height="2.4" fill="#555" rx="0.5" /><rect x="15.1" y="18.4" width="2.6" height="2.4" fill="#555" rx="0.5" /></g>
<g transform="translate(49.0,129.0)"><g transform="rotate(38 12 12)"><ellipse cx="12" cy="12" rx="11.6" ry="7.2" fill="#5aae40" stroke="#4a9234" stroke-width="0.8"/><ellipse cx="12" cy="13.6" rx="9.6" ry="5" fill="#a6d98a"/><ellipse cx="12" cy="14.3" rx="7.2" ry="3.6" fill="#3d8ec9"/><ellipse cx="12" cy="14.7" rx="4.8" ry="2.2" fill="#9fcdf0"/><ellipse cx="12" cy="15" rx="2.4" ry="1" fill="#3d7fc0"/></g></g>
<g transform="translate(82.5,129.0)"><path d="M3,6.5 L11,10 V22 L3,17.5Z" fill="#62a044" /><path d="M5.5,9 L14,5.5 V16 L5.5,19.5Z" fill="#a8d88c" stroke="#6fa552" stroke-width="0.7" /><path d="M3,6.5 L14,3 L21.5,6 L11,10Z" fill="#82b866" /><path d="M3,6.5 L14,3 L21.5,6 V17 L11,22 L3,17.5Z M3,6.5 L11,10 L21.5,6 M11,10 V22 M14,3 V14 L3,17.5 M14,14 L21.5,17" fill="none" stroke="#6f7a5f" stroke-width="0.9" stroke-linejoin="round"/></g>
<g transform="translate(115.5,129.0)"><path d="M3,6.5 L14,3 L21.5,6 V17 L11,22 L3,17.5Z M3,6.5 L11,10 L21.5,6 M11,10 V22 M14,3 V14 L3,17.5 M14,14 L21.5,17" fill="none" stroke="#6f7a5f" stroke-width="0.9" stroke-linejoin="round"/><path d="M6,8 L16.5,4.5 V17 L6,20.5Z" fill="#a8d88c" stroke="#6fa552" stroke-width="0.7" fill-opacity="0.92"/><path d="M11,10 V22 M3,6.5 L11,10 L21.5,6" fill="none" stroke="#6f7a5f" stroke-width="0.9" /></g>
<g transform="translate(148.5,129.0)"><path d="M3,6.5 L14,3 L21.5,6 V17 L11,22 L3,17.5Z M3,6.5 L11,10 L21.5,6 M11,10 V22 M14,3 V14 L3,17.5 M14,14 L21.5,17" fill="none" stroke="#6f7a5f" stroke-width="0.9" stroke-linejoin="round"/><path d="M3,6.5 L8,8.5 V14 L3,12Z" fill="#62a044" /><path d="M3,6.5 L8.5,4.7 L13,6.8 L8,8.5Z" fill="#82b866" /><path d="M8,8.5 L13,6.8 V12 L8,14Z" fill="#9fd080" stroke="#6fa552" stroke-width="0.5" /><path d="M14,5 L21.5,6.5 V17 L14,15Z" fill="#9fd080" stroke="#6fa552" stroke-width="0.6" /><path d="M14.5,3.2 L21.5,6 L18,7.5 L12,5Z" fill="#82b866" /></g>
<g transform="translate(181.5,129.0)"><path d="M3,6.5 L14,3 L21.5,6 V17 L11,22 L3,17.5Z M3,6.5 L11,10 L21.5,6 M11,10 V22 M14,3 V14 L3,17.5 M14,14 L21.5,17" fill="none" stroke="#b9b9b9" stroke-width="0.9" stroke-linejoin="round"/><path d="M7,9.5 L13,7.5 L17.5,9.3 V15.5 L12,18 L7,15.5Z" fill="#b8b8b8" /><path d="M7,9.5 L12,11.5 V18 L7,15.5Z" fill="#9f9f9f" /><path d="M12,11.5 L17.5,9.3 V15.5 L12,18Z" fill="#c9c9c9" /></g>
<g transform="translate(215.0,129.0)"><circle cx="12" cy="12" r="8.6" fill="#dcebf5" stroke="#8fa8a0" stroke-width="1" /><ellipse cx="12" cy="6.8" rx="2.8" ry="2.2" fill="#cfe6f5" stroke="#8fb09a" stroke-width="0.7"/><ellipse cx="12" cy="17.2" rx="2.8" ry="2.2" fill="#cfe6f5" stroke="#8fb09a" stroke-width="0.7"/><ellipse cx="6.8" cy="12" rx="2.8" ry="2.2" fill="#cfe6f5" stroke="#8fb09a" stroke-width="0.7"/><ellipse cx="17.2" cy="12" rx="2.8" ry="2.2" fill="#cfe6f5" stroke="#8fb09a" stroke-width="0.7"/><ellipse cx="12" cy="12" rx="3.5" ry="2.8" fill="#d8ecf8" stroke="#8fb09a" stroke-width="0.7"/><g transform="translate(12,1.3) rotate(0)"><path d="M0,-0.6 L3,3.4 H-3Z" fill="#8fbf73" stroke="#6f9a5a" stroke-width="0.6" /></g><g transform="translate(22.7,12) rotate(90)"><path d="M0,-0.6 L3,3.4 H-3Z" fill="#8fbf73" stroke="#6f9a5a" stroke-width="0.6" /></g><g transform="translate(12,22.7) rotate(180)"><path d="M0,-0.6 L3,3.4 H-3Z" fill="#8fbf73" stroke="#6f9a5a" stroke-width="0.6" /></g><g transform="translate(1.3,12) rotate(270)"><path d="M0,-0.6 L3,3.4 H-3Z" fill="#8fbf73" stroke="#6f9a5a" stroke-width="0.6" /></g></g>
<g transform="translate(248.0,129.0)"><path d="M3,4.5 Q8,1.5 13,4 T21.5,4.5 M12,8.5 Q16,7.5 21.5,9 M13.5,12 H21.5 M12,15.5 Q16,16.5 21.5,15 M3,19.5 Q8,22.5 13,20 T21.5,19.5" fill="none" stroke="#8fa78a" stroke-width="1.2" /><circle cx="8" cy="12" r="5.2" fill="#a8d08d" stroke="#76a15c" stroke-width="1.2" /></g>
<g transform="translate(281.0,129.0)"><path d="M2.5,21 V15.5 Q13,13.5 15.5,4 L22.5,9 V21Z" fill="#e9e9e9" stroke="#9a9a9a" stroke-width="0.8" /><path d="M2.5,21 V15.5 Q13,13.5 15.5,4 L21,7.5 Q19,18.5 7,21Z" fill="#a8d08d" stroke="#76a15c" stroke-width="1.1" /></g>
<g transform="translate(314.0,129.0)"><circle cx="12" cy="12.5" r="9.3" fill="#ececec" stroke="#9a9a9a" stroke-width="1.1" /><circle cx="15.2" cy="14.8" r="3.8" fill="#a8d08d" stroke="#76a15c" stroke-width="0.9" /><circle cx="8.5" cy="9" r="2.4" fill="#f4f4f4" stroke="#9a9a9a" stroke-width="0.9" /><circle cx="9" cy="15.8" r="1.7" fill="#a8d08d" stroke="#76a15c" stroke-width="0.8" /><circle cx="12" cy="12.6" r="1.2" fill="#f4f4f4" stroke="#9a9a9a" stroke-width="0.7" /></g>
<g transform="translate(347.0,129.0)"><circle cx="13" cy="13.5" r="8.8" fill="#ececec" stroke="#9a9a9a" stroke-width="1.1" /><circle cx="4.5" cy="4.2" r="2.4" fill="#f4f4f4" stroke="#9a9a9a" stroke-width="1" /><path d="M6,6 L8.5,8.5" fill="none" stroke="#9a9a9a" stroke-width="1" /><circle cx="16" cy="14.5" r="3.6" fill="#a8d08d" stroke="#76a15c" stroke-width="0.9" /><circle cx="10" cy="16.5" r="1.6" fill="#a8d08d" stroke="#76a15c" stroke-width="0.8" /></g>
<g transform="translate(395.0,129.0)"><path d="M3.5,2 V20.5 H21" fill="none" stroke="#a58d6a" stroke-width="1.3" /><path d="M10,3 V18" fill="none" stroke="#3b8ec6" stroke-width="1.1" /><rect x="8" y="6.5" width="4" height="6.5" fill="#dcebf5" stroke="#3b8ec6" stroke-width="1.1" /><path d="M8,9.7 H12" fill="none" stroke="#3b8ec6" stroke-width="1" /><path d="M7.5,18 H12.5" fill="none" stroke="#3b8ec6" stroke-width="1.2" /></g>
<g transform="translate(428.5,129.0)"><path d="M3,2.5 H18 V9 H11 V16.5 H3Z" fill="#d6e4f2" stroke="#7f93a8" stroke-width="1.2" /><rect x="13" y="12.5" width="8" height="8" fill="#9fd080" stroke="#6fa552" stroke-width="0.8" stroke-dasharray="1.5 1"/><path d="M15.6,12.5 v8 M18.3,12.5 v8 M13,15.2 h8 M13,17.8 h8" fill="none" stroke="#6fa552" stroke-width="0.6" /></g>
<g transform="translate(461.5,129.0)"><path d="M2.5,1.5 V22 H22.5" fill="none" stroke="#8a6f4a" stroke-width="1.3" /><rect x="4.5" y="16.3" width="2.7" height="5" fill="#2f7fc8" /><rect x="7.2" y="11.8" width="2.7" height="9.5" fill="#2f9fc0" /><rect x="9.9" y="6.3" width="2.7" height="15" fill="#3aa86a" /><rect x="12.6" y="1.8" width="2.7" height="19.5" fill="#4fb04a" /><rect x="15.3" y="8.8" width="2.7" height="12.5" fill="#a8c83a" /><rect x="18" y="13.3" width="2.7" height="8" fill="#e6cf2f" /><rect x="20.2" y="16.8" width="2.7" height="4.5" fill="#f0c02a" /></g>
<g transform="translate(495.0,129.0)"><circle cx="7" cy="6.5" r="3.6" fill="#eef2f6" stroke="#8a9aa8" stroke-width="1.1" /><path d="M7,4.3 V6.8 H8.8" fill="none" stroke="#6a7a88" stroke-width="0.9" /><circle cx="16.5" cy="6.3" r="4" fill="#b8975a" stroke="#9a7d45" stroke-width="0.8" /><path d="M2,19.2 H22" fill="none" stroke="#3b8ec6" stroke-width="1" /><path d="M2.5,16 l1.2,-2 l1,3.5 l1.2,-4.5 l1,5 l1.2,-5.5 l1,5.5 l1.2,-4.5 l1,4 l1.2,-4.8 l1,4.5 l1.2,-3 l1,2.5 l1.2,-2 l1,1.5 l1.5,-0.5" fill="none" stroke="#3b8ec6" stroke-width="0.9" /></g>
<g transform="translate(528.0,129.0)"><g transform="rotate(-8 12 12)"><rect x="3.5" y="4.5" width="16" height="15.5" fill="#8fcf7a" stroke="#5f9a4a" stroke-width="1" /></g><path d="M5,19 L19.5,4" fill="none" stroke="#2f6f9a" stroke-width="3.2" /><path d="M5,19 L19.5,4" fill="none" stroke="#9fd8e8" stroke-width="1.6" stroke-dasharray="1 1"/><path d="M3,21 L6,18" fill="none" stroke="#3a3a3a" stroke-width="1.2" /></g>
<g transform="translate(561.5,129.0)"><circle cx="6.5" cy="6.5" r="3.6" fill="#eef2f6" stroke="#8a9aa8" stroke-width="1.1" /><path d="M6.5,4.3 V6.8 H8.3" fill="none" stroke="#6a7a88" stroke-width="0.9" /><rect x="12" y="2.5" width="9" height="8" fill="none" stroke="#9ab08a" stroke-width="0.8" stroke-dasharray="1.5 1"/><text x="14" y="9.5" font-family="Liberation Sans, sans-serif" font-size="7px" font-weight="bold" fill="#7a9a6a" >A</text><path d="M2,19.2 H22" fill="none" stroke="#3b8ec6" stroke-width="1" /><path d="M2.5,16 l1.2,-2 l1,3.5 l1.2,-4.5 l1,5 l1.2,-5.5 l1,5.5 l1.2,-4.5 l1,4 l1.2,-4.8 l1,4.5 l1.2,-3 l1,2.5 l1.2,-2 l1,1.5 l1.5,-0.5" fill="none" stroke="#3b8ec6" stroke-width="0.9" /></g>
<g transform="translate(594.5,129.0)"><path d="M12,1.5 L21,5.5 V16.5 L12,22.5 L3,16.5 V5.5Z" fill="#d6e4f0" stroke="#c3d3e2" stroke-width="1" /><g transform="rotate(0 12 12)"><path d="M12,5 V19" fill="none" stroke="#3f78a8" stroke-width="1.2" /></g><g transform="rotate(60 12 12)"><path d="M12,5 V19" fill="none" stroke="#3f78a8" stroke-width="1.2" /></g><g transform="rotate(120 12 12)"><path d="M12,5 V19" fill="none" stroke="#3f78a8" stroke-width="1.2" /></g></g>
<g transform="translate(628.0,129.0)"><text x="0.5" y="18.5" font-family="Liberation Sans, sans-serif" font-size="20px" fill="#6a7a86" >{</text><text x="17" y="18.5" font-family="Liberation Sans, sans-serif" font-size="20px" fill="#6a7a86" >}</text><circle cx="8.5" cy="16" r="1.1" fill="#3b8ec6" /><circle cx="12" cy="16" r="1.1" fill="#3b8ec6" /><circle cx="15.5" cy="16" r="1.1" fill="#3b8ec6" /></g>
<g transform="translate(676.0,129.0)"><g transform="rotate(-45 12 12)"><rect x="-1.5" y="8.3" width="27" height="7.4" fill="#f0c63a" stroke="#c9a030" stroke-width="0.9" /><path d="M1,8.3 v3" fill="none" stroke="#a98a2a" stroke-width="0.7" /><path d="M3.8,8.3 v2" fill="none" stroke="#a98a2a" stroke-width="0.7" /><path d="M6.6,8.3 v3" fill="none" stroke="#a98a2a" stroke-width="0.7" /><path d="M9.4,8.3 v2" fill="none" stroke="#a98a2a" stroke-width="0.7" /><path d="M12.2,8.3 v3" fill="none" stroke="#a98a2a" stroke-width="0.7" /><path d="M15,8.3 v2" fill="none" stroke="#a98a2a" stroke-width="0.7" /><path d="M17.8,8.3 v3" fill="none" stroke="#a98a2a" stroke-width="0.7" /><path d="M20.6,8.3 v2" fill="none" stroke="#a98a2a" stroke-width="0.7" /><path d="M23.4,8.3 v3" fill="none" stroke="#a98a2a" stroke-width="0.7" /></g></g>
<g transform="translate(709.0,129.0)"><g transform="rotate(-35 12 12)"><path d="M1.5,17 A10.5,10.5 0 0 1 22.5,17 V19.5 H1.5Z" fill="#f0c63a" stroke="#c9a030" stroke-width="1" /><path d="M7.5,17 A4.5,4.5 0 0 1 16.5,17Z" fill="#f5f5f5" stroke="#c9a030" stroke-width="0.9" /></g></g>
<rect x="4" y="129.5" width="1" height="1" fill="#cfcfcf" /><rect x="7" y="129.5" width="1" height="1" fill="#cfcfcf" /><rect x="4" y="132.5" width="1" height="1" fill="#cfcfcf" /><rect x="7" y="132.5" width="1" height="1" fill="#cfcfcf" /><rect x="4" y="135.5" width="1" height="1" fill="#cfcfcf" /><rect x="7" y="135.5" width="1" height="1" fill="#cfcfcf" /><rect x="4" y="138.5" width="1" height="1" fill="#cfcfcf" /><rect x="7" y="138.5" width="1" height="1" fill="#cfcfcf" /><rect x="4" y="141.5" width="1" height="1" fill="#cfcfcf" /><rect x="7" y="141.5" width="1" height="1" fill="#cfcfcf" /><rect x="4" y="144.5" width="1" height="1" fill="#cfcfcf" /><rect x="7" y="144.5" width="1" height="1" fill="#cfcfcf" /><rect x="4" y="147.5" width="1" height="1" fill="#cfcfcf" /><rect x="7" y="147.5" width="1" height="1" fill="#cfcfcf" /><rect x="4" y="150.5" width="1" height="1" fill="#cfcfcf" /><rect x="7" y="150.5" width="1" height="1" fill="#cfcfcf" />
<rect x="384.5" y="129.5" width="1" height="1" fill="#cfcfcf" /><rect x="387.5" y="129.5" width="1" height="1" fill="#cfcfcf" /><rect x="384.5" y="132.5" width="1" height="1" fill="#cfcfcf" /><rect x="387.5" y="132.5" width="1" height="1" fill="#cfcfcf" /><rect x="384.5" y="135.5" width="1" height="1" fill="#cfcfcf" /><rect x="387.5" y="135.5" width="1" height="1" fill="#cfcfcf" /><rect x="384.5" y="138.5" width="1" height="1" fill="#cfcfcf" /><rect x="387.5" y="138.5" width="1" height="1" fill="#cfcfcf" /><rect x="384.5" y="141.5" width="1" height="1" fill="#cfcfcf" /><rect x="387.5" y="141.5" width="1" height="1" fill="#cfcfcf" /><rect x="384.5" y="144.5" width="1" height="1" fill="#cfcfcf" /><rect x="387.5" y="144.5" width="1" height="1" fill="#cfcfcf" /><rect x="384.5" y="147.5" width="1" height="1" fill="#cfcfcf" /><rect x="387.5" y="147.5" width="1" height="1" fill="#cfcfcf" /><rect x="384.5" y="150.5" width="1" height="1" fill="#cfcfcf" /><rect x="387.5" y="150.5" width="1" height="1" fill="#cfcfcf" />
<rect x="664.5" y="129.5" width="1" height="1" fill="#cfcfcf" /><rect x="667.5" y="129.5" width="1" height="1" fill="#cfcfcf" /><rect x="664.5" y="132.5" width="1" height="1" fill="#cfcfcf" /><rect x="667.5" y="132.5" width="1" height="1" fill="#cfcfcf" /><rect x="664.5" y="135.5" width="1" height="1" fill="#cfcfcf" /><rect x="667.5" y="135.5" width="1" height="1" fill="#cfcfcf" /><rect x="664.5" y="138.5" width="1" height="1" fill="#cfcfcf" /><rect x="667.5" y="138.5" width="1" height="1" fill="#cfcfcf" /><rect x="664.5" y="141.5" width="1" height="1" fill="#cfcfcf" /><rect x="667.5" y="141.5" width="1" height="1" fill="#cfcfcf" /><rect x="664.5" y="144.5" width="1" height="1" fill="#cfcfcf" /><rect x="667.5" y="144.5" width="1" height="1" fill="#cfcfcf" /><rect x="664.5" y="147.5" width="1" height="1" fill="#cfcfcf" /><rect x="667.5" y="147.5" width="1" height="1" fill="#cfcfcf" /><rect x="664.5" y="150.5" width="1" height="1" fill="#cfcfcf" /><rect x="667.5" y="150.5" width="1" height="1" fill="#cfcfcf" />
<g transform="translate(2.5,6.0)"><path d="M0,10.5 L3.4,0 H7.2 L3.8,10.5Z" fill="#d62a2a" /><path d="M4.4,10.5 L7.8,0 H11 L7.6,10.5Z" fill="#2c9646" /><path d="M8.2,10.5 L11.6,0 H15.2 L11.8,10.5Z" fill="#2a50b4" /><path d="M5.2,6.2 L8.6,4.6 L8.2,6 L11,4.8" fill="none" stroke="#eef4f8" stroke-width="0.9" /></g>
<path d="M1801,10.5 H1811" fill="none" stroke="#222" stroke-width="1.1" />
<rect x="1846.5" y="7.5" width="8" height="8" fill="none" stroke="#222" stroke-width="1.1" rx="1.8" /><path d="M1849,7.3 V6.2 Q1849,5.2 1850,5.2 H1855.8 Q1857,5.2 1857,6.3 V12 Q1857,13 1856,13 H1854.8" fill="none" stroke="#222" stroke-width="1.1" />
<path d="M1892,5.5 L1902,15.5 M1902,5.5 L1892,15.5" fill="none" stroke="#222" stroke-width="1.1" />
<rect x="266.5" y="165.3" width="10" height="10" fill="none" stroke="#6e6e6e" stroke-width="1" rx="1.5" /><rect x="269" y="168.1" width="4.6" height="4.6" fill="none" stroke="#6e6e6e" stroke-width="0.9" rx="0.8" /><path d="M270.6,168.1 v-1.4 h4 v4 h-1.3" fill="none" stroke="#6e6e6e" stroke-width="0.8" /><rect x="280.5" y="165.3" width="10" height="10" fill="none" stroke="#6e6e6e" stroke-width="1" rx="1.5" /><path d="M283,167.8 l5,5 M288,167.8 l-5,5" fill="none" stroke="#444" stroke-width="1.4" />
<rect x="266.5" y="544.8" width="10" height="10" fill="none" stroke="#6e6e6e" stroke-width="1" rx="1.5" /><rect x="269" y="547.6" width="4.6" height="4.6" fill="none" stroke="#6e6e6e" stroke-width="0.9" rx="0.8" /><path d="M270.6,547.6 v-1.4 h4 v4 h-1.3" fill="none" stroke="#6e6e6e" stroke-width="0.8" /><rect x="280.5" y="544.8" width="10" height="10" fill="none" stroke="#6e6e6e" stroke-width="1" rx="1.5" /><path d="M283,547.3 l5,5 M288,547.3 l-5,5" fill="none" stroke="#444" stroke-width="1.4" />
<g transform="translate(25.8,187.5)"><defs><linearGradient id="gsv" x1="0" y1="0" x2="1" y2="0"><stop offset="0" stop-color="#6e6e6e"/><stop offset="0.5" stop-color="#d9d9d9"/><stop offset="1" stop-color="#6e6e6e"/></linearGradient></defs><rect x="0.5" y="0.5" width="7.5" height="13" fill="url(#gsv)" stroke="#3c3c3c" stroke-width="1" rx="1" /><rect x="2" y="1.6" width="4.5" height="2.2" fill="#2a2a2a" /><rect x="2" y="4.8" width="4.5" height="0.8" fill="#eee" /></g>
<g transform="translate(23.0,208.8)"><path d="M0.5,4 L6,1 L15,2.5 L15.5,11.5 L10,15 L1,13Z" fill="#4f8f3a" /><path d="M0.5,4 L6,1 L15,2.5 L9.5,5.5Z" fill="#8fcf6a" /><path d="M9.5,5.5 L15,2.5 L15.5,11.5 L10,15Z" fill="#7cc05a" /><path d="M0.5,4 L9.5,5.5 L10,15 L1,13Z" fill="#5c9e44" /></g>
<g transform="translate(40.0,231.0)"><path d="M0.5,4 L6,1 L15,2.5 L15.5,11.5 L10,15 L1,13Z" fill="#4f8f3a" /><path d="M0.5,4 L6,1 L15,2.5 L9.5,5.5Z" fill="#8fcf6a" /><path d="M9.5,5.5 L15,2.5 L15.5,11.5 L10,15Z" fill="#7cc05a" /><path d="M0.5,4 L9.5,5.5 L10,15 L1,13Z" fill="#5c9e44" /></g>
<g transform="translate(40.0,253.0)"><path d="M0.5,4 L6,1 L15,2.5 L15.5,11.5 L10,15 L1,13Z" fill="#4f8f3a" /><path d="M0.5,4 L6,1 L15,2.5 L9.5,5.5Z" fill="#8fcf6a" /><path d="M9.5,5.5 L15,2.5 L15.5,11.5 L10,15Z" fill="#7cc05a" /><path d="M0.5,4 L9.5,5.5 L10,15 L1,13Z" fill="#5c9e44" /></g>
<g transform="translate(40.0,275.0)"><path d="M0.5,4 L6,1 L15,2.5 L15.5,11.5 L10,15 L1,13Z" fill="#4f8f3a" /><path d="M0.5,4 L6,1 L15,2.5 L9.5,5.5Z" fill="#8fcf6a" /><path d="M9.5,5.5 L15,2.5 L15.5,11.5 L10,15Z" fill="#7cc05a" /><path d="M0.5,4 L9.5,5.5 L10,15 L1,13Z" fill="#5c9e44" /></g>
<path d="M30.5,181 V187 M30.5,201.5 V209 M30.5,224 V282.5 H40 M35,238.7 H40 M48,247 V253" fill="none" stroke="#8c8c8c" stroke-width="1" />
<rect x="26.5" y="234.5" width="8.2" height="8.2" fill="#fff" stroke="#8c8c8c" stroke-width="1" /><path d="M28.5,238.7 h4.4" fill="none" stroke="#333" stroke-width="1" />
<g transform="translate(5.0,211.5)"><path d="M1,5.5 Q7,-1.5 13,5.5" fill="none" stroke="#b8b8b8" stroke-width="1.1" stroke-dasharray="2 1.5"/><path d="M2,8.5 l1,1.5 M5.5,9.5 l0.3,1.7 M9,9.5 l-0.3,1.7 M12,8.5 l-1,1.5" fill="none" stroke="#b8b8b8" stroke-width="1" /></g>
<g transform="translate(5.0,233.5)"><path d="M1,5.5 Q7,-1.5 13,5.5" fill="none" stroke="#b8b8b8" stroke-width="1.1" stroke-dasharray="2 1.5"/><path d="M2,8.5 l1,1.5 M5.5,9.5 l0.3,1.7 M9,9.5 l-0.3,1.7 M12,8.5 l-1,1.5" fill="none" stroke="#b8b8b8" stroke-width="1" /></g>
<g transform="translate(5.3,255.0)"><path d="M0,5.5 Q7,-1.5 14,5.5 Q7,12 0,5.5Z" fill="#eaf0f8" stroke="#7f8aa0" stroke-width="0.8" /><circle cx="7" cy="5.3" r="3.6" fill="#1f4f9a" /><circle cx="7" cy="5.3" r="1.8" fill="#0c1430" /><circle cx="5.8" cy="4" r="1" fill="#e8f0ff" /></g>
<g transform="translate(5.0,277.5)"><path d="M1,5.5 Q7,-1.5 13,5.5" fill="none" stroke="#b8b8b8" stroke-width="1.1" stroke-dasharray="2 1.5"/><path d="M2,8.5 l1,1.5 M5.5,9.5 l0.3,1.7 M9,9.5 l-0.3,1.7 M12,8.5 l-1,1.5" fill="none" stroke="#b8b8b8" stroke-width="1" /></g>
<rect x="312" y="168.5" width="14.5" height="13.5" fill="#fff" stroke="#222" stroke-width="1.2" /><rect x="312" y="168.5" width="14.5" height="3.4" fill="#222" />
<rect x="385.5" y="170" width="10" height="10" fill="none" stroke="#6e6e6e" stroke-width="1" rx="1.5" /><path d="M388,172.5 l5,5 M393,172.5 l-5,5" fill="none" stroke="#444" stroke-width="1.3" />
<rect x="1820" y="193" width="13" height="14" fill="#d3dcef" stroke="#8c9ab8" stroke-width="1" /><path d="M1826.5,193 V207" fill="none" stroke="#8c9ab8" stroke-width="1" />
<rect x="1847" y="193" width="13" height="14" fill="#d3dcef" stroke="#8c9ab8" stroke-width="1" /><path d="M1847,200 H1860" fill="none" stroke="#8c9ab8" stroke-width="1" />
<rect x="1872.5" y="192" width="16" height="16" fill="#fff" stroke="#222" stroke-width="1.4" /><rect x="1872.5" y="192" width="16" height="3.6" fill="#222" />
<rect x="1902.5" y="196" width="9.5" height="9.5" fill="none" stroke="#6e6e6e" stroke-width="1" rx="1.5" /><path d="M1905,198.5 l4.5,4.5 M1909.5,198.5 l-4.5,4.5" fill="none" stroke="#444" stroke-width="1.2" />
<g transform="translate(305.0,192.0)"><path d="M2,3.3 h3.3 l1.2,-1.8 h5 l1.2,1.8 h3.3 q1,0 1,1 v7 q0,1 -1,1 h-14 q-1,0 -1,-1 v-7 q0,-1 1,-1Z" fill="#dcdcdc" stroke="#a8a8a8" stroke-width="0.9" /><circle cx="9" cy="8.3" r="3.2" fill="#e4e4e4" stroke="#a8a8a8" stroke-width="1.1" /><path d="M3,16 Q3,11.5 8,11.5 H11" fill="none" stroke="#a8a8a8" stroke-width="2" /><path d="M4.5,13 L2,17 L7,17Z" fill="#a8a8a8" /></g>
<g transform="translate(331.7,192.0)"><g transform="translate(18,0) scale(-1,1)"><path d="M2,3.3 h3.3 l1.2,-1.8 h5 l1.2,1.8 h3.3 q1,0 1,1 v7 q0,1 -1,1 h-14 q-1,0 -1,-1 v-7 q0,-1 1,-1Z" fill="#dcdcdc" stroke="#a8a8a8" stroke-width="0.9" /><circle cx="9" cy="8.3" r="3.2" fill="#e4e4e4" stroke="#a8a8a8" stroke-width="1.1" /><path d="M3,16 Q3,11.5 8,11.5 H11" fill="none" stroke="#a8a8a8" stroke-width="2" /><path d="M4.5,13 L2,17 L7,17Z" fill="#a8a8a8" /></g></g>
<g transform="translate(363.6,192.0)"><path d="M2,5.8 h3.3 l1.2,-1.8 h5 l1.2,1.8 h3.3 q1,0 1,1 v7 q0,1 -1,1 h-14 q-1,0 -1,-1 v-7 q0,-1 1,-1Z" fill="#d4d4d4" stroke="#9c9c9c" stroke-width="0.9" /><circle cx="9" cy="10.8" r="3.2" fill="#e4e4e4" stroke="#9c9c9c" stroke-width="1.1" /><path d="M1,4 V1.5 H4 M14,1.5 H17 V4 M17,14 V16.8 H14 M4,16.8 H1 V14" fill="none" stroke="#e09a9a" stroke-width="1" /></g>
<g transform="translate(421.0,192.0)"><path d="M1.5,3.3 h3.3 l1.2,-1.8 h5 l1.2,1.8 h3.3 q1,0 1,1 v7 q0,1 -1,1 h-14 q-1,0 -1,-1 v-7 q0,-1 1,-1Z" fill="#ccd4e4" stroke="#8a94b0" stroke-width="0.9" /><circle cx="8.5" cy="8.3" r="3.2" fill="#e4e4e4" stroke="#8a94b0" stroke-width="1.1" /><circle cx="9.5" cy="8.5" r="3.3" fill="#e4ecf6" stroke="#6a7aa0" stroke-width="1.2" /><path d="M12,11 L16.5,16" fill="none" stroke="#d9a62a" stroke-width="2.4" stroke-linecap="round"/></g>
<g transform="translate(453.5,192.0)"><rect x="1" y="1" width="16" height="16" fill="none" stroke="#9a9a9a" stroke-width="1.1" stroke-dasharray="1.6 2"/><path d="M9,4.8 L13.2,9 L9,13.2 L4.8,9Z" fill="#a8d08d" stroke="#76a15c" stroke-width="1" /></g>
<g transform="translate(479.6,192.0)"><rect x="1" y="1" width="16" height="16" fill="none" stroke="#d98a8a" stroke-width="1.1" stroke-dasharray="1.6 2"/><rect x="4.5" y="7.3" width="9" height="3.4" fill="#de3429" rx="1" /></g>
<g transform="translate(505.3,192.0)"><rect x="1" y="1" width="16" height="16" fill="none" stroke="#9a9a9a" stroke-width="1.1" stroke-dasharray="1.6 2"/><path d="M7.5,2.5 L10.5,5.5 L7.5,8.5 L4.5,5.5Z" fill="#a8d08d" stroke="#76a15c" stroke-width="0.8" /><rect x="3.5" y="11.5" width="8" height="2.6" fill="#de3429" /><path d="M11.5,11 l5.5,5.5" fill="none" stroke="#555" stroke-width="1.8" /><path d="M10.7,10.2 l3.2,0.5 l-2.7,2.7Z" fill="#555" /></g>
<g transform="translate(537.5,192.0)"><rect x="1" y="1" width="16" height="16" fill="none" stroke="#9a9a9a" stroke-width="1.1" stroke-dasharray="1.6 2"/><path d="M9,3.5 L14.5,14 H3.5Z" fill="#a8d08d" stroke="#76a15c" stroke-width="1" /><path d="M12,12 l5.5,5.5" fill="none" stroke="#666" stroke-width="1.8" /><path d="M11.2,11.2 l3.2,0.5 l-2.7,2.7Z" fill="#666" /></g>
<g transform="translate(563.7,192.0)"><rect x="1" y="1" width="16" height="16" fill="none" stroke="#d98a8a" stroke-width="1.1" stroke-dasharray="1.6 2"/><circle cx="9" cy="4" r="1.1" fill="#333" /><circle cx="4.5" cy="13" r="1.1" fill="#de3429" /><circle cx="13" cy="10" r="1.1" fill="#333" /><path d="M9,4 L4.5,13 L13,10Z" fill="none" stroke="#bbb" stroke-width="0.6" /><path d="M12,12 l5.5,5.5" fill="none" stroke="#444" stroke-width="1.8" /><path d="M11.2,11.2 l3.2,0.5 l-2.7,2.7Z" fill="#444" /></g>
<g transform="translate(590.3,192.0)"><rect x="1" y="1" width="16" height="16" fill="none" stroke="#b8b8b8" stroke-width="1.1" stroke-dasharray="1.6 2"/><path d="M2.5,6.5 L9,3 L15.5,5 V10.5 L9,14 L2.5,11.5Z" fill="#a8d08d" stroke="#76a15c" stroke-width="0.9" /><path d="M2.5,6.5 L9,8.5 L15.5,5 M9,8.5 V14" fill="none" stroke="#76a15c" stroke-width="0.7" /><path d="M9.5,12.5 l5.5,5.5" fill="none" stroke="#666" stroke-width="1.8" /><path d="M8.7,11.7 l3.2,0.5 l-2.7,2.7Z" fill="#666" /></g>
<g transform="translate(616.8,192.0)"><rect x="2" y="3" width="10" height="12" fill="none" stroke="#d98a8a" stroke-width="1" stroke-dasharray="1.2 1.6"/><path d="M6.5,1 V17 M2,9 H16 M12,3 L16,1 V13 L12,15" fill="none" stroke="#d98a8a" stroke-width="0.9" stroke-dasharray="1.2 1.6"/><path d="M11.5,12 l5.5,5.5" fill="none" stroke="#666" stroke-width="1.8" /><path d="M10.7,11.2 l3.2,0.5 l-2.7,2.7Z" fill="#666" /></g>
<g transform="translate(640.7,192.0)"><path d="M2,3 L15,1.5 L16.5,11 L5,16Z" fill="none" stroke="#a9c0d9" stroke-width="0.9" stroke-dasharray="1.5 1.8"/><path d="M5,10.5 L11,5.5 L12.5,12Z" fill="#a8d08d" stroke="#76a15c" stroke-width="0.8" /><path d="M11,12 l5.5,5.5" fill="none" stroke="#888" stroke-width="1.8" /><path d="M10.2,11.2 l3.2,0.5 l-2.7,2.7Z" fill="#888" /></g>
<g transform="translate(667.0,192.0)"><path d="M2,4 L14,1.5 L16.5,12 L5,16Z" fill="none" stroke="#d9b0b0" stroke-width="0.8" stroke-dasharray="1.2 1.8"/><circle cx="5" cy="5" r="1.15" fill="#c0392b" /><circle cx="10" cy="4" r="1.15" fill="#c0392b" /><circle cx="8" cy="8.5" r="1.15" fill="#c0392b" /><circle cx="13" cy="8" r="1.15" fill="#c0392b" /><circle cx="6" cy="12.5" r="1.15" fill="#c0392b" /><circle cx="11" cy="12.5" r="1.15" fill="#c0392b" /></g>
<g transform="translate(693.7,192.0)"><rect x="1" y="1" width="16" height="16" fill="none" stroke="#a9c0d9" stroke-width="1.1" stroke-dasharray="1.6 2"/><circle cx="4.8" cy="5" r="2" fill="#2f6f9a" /><circle cx="4.8" cy="13" r="2" fill="#2f6f9a" /><circle cx="13" cy="4.5" r="1.2" fill="#2f6f9a" /><circle cx="12" cy="10" r="3" fill="#a8d08d" stroke="#76a15c" stroke-width="1.2" /><path d="M14,12.3 L16.8,16" fill="none" stroke="#666" stroke-width="2" /></g>
<g transform="translate(719.4,192.0)"><path d="M2,6 L8.5,2.5 L16,4.5 V10 L9.5,13.5 L2,11Z" fill="#a8d08d" stroke="#76a15c" stroke-width="0.9" /><path d="M1,3 l3,2 M1,13 l3,-2 M10,1 l0.5,2" fill="none" stroke="#7a9a6a" stroke-width="0.8" /><path d="M8.5,11 L13,16.5" fill="none" stroke="#666" stroke-width="1.8" /></g>
<g transform="translate(745.7,192.0)"><path d="M3,7 L9,3 L15,5 V13 L9,16.5 L3,14Z" fill="#c8c8c8" stroke="#a0a0a0" stroke-width="0.9" /><path d="M5,3 l10,12 M11,2 l-2,14" fill="none" stroke="#b0b0b0" stroke-width="0.8" /><path d="M10.5,10 L16,16.5" fill="none" stroke="#999" stroke-width="2" /></g>
<g transform="translate(773.8,192.0)"><circle cx="5.5" cy="5.5" r="1.6" fill="#d0d0d0" stroke="#b0b0b0" stroke-width="0.8" /><path d="M7,7 L14,14.5" fill="none" stroke="#b8b8b8" stroke-width="2" /></g>
<g transform="translate(798.0,192.0)"><path d="M8,2.5 L14.5,14 H2Z" fill="#a8d08d" stroke="#76a15c" stroke-width="1.1" /><path d="M11,11 L16,16.5" fill="none" stroke="#777" stroke-width="2" /></g>
<g transform="translate(824.4,192.0)"><path d="M8.5,3 L3,14 L13.5,13Z" fill="none" stroke="#c9c9c9" stroke-width="0.8" stroke-dasharray="1.5 1.5"/><circle cx="8.5" cy="2.5" r="1.2" fill="#555" /><circle cx="2.5" cy="14" r="1.2" fill="#c0392b" /><circle cx="13" cy="13" r="1.2" fill="#555" /><path d="M13,12 L17,17" fill="none" stroke="#777" stroke-width="2" /></g>
<g transform="translate(848.8,192.0)"><path d="M6,8 L11,16.5 H1Z" fill="#a8d08d" stroke="#76a15c" stroke-width="1" /><text x="9.5" y="11" font-family="Liberation Sans, sans-serif" font-size="14px" fill="#777" >?</text></g>
<g transform="translate(876.0,192.0)"><circle cx="4.5" cy="14.5" r="2" fill="#d12f2f" /><text x="8.5" y="11.5" font-family="Liberation Sans, sans-serif" font-size="14px" fill="#777" >?</text></g>
<g transform="translate(901.7,192.0)"><path d="M6.5,1.5 h5 v5 h5 v5 h-5 v5 h-5 v-5 h-5 v-5 h5Z" fill="#b9b9b9" stroke="#a5a5a5" stroke-width="0.6" /></g>
<g transform="translate(927.6,192.0)"><rect x="1.5" y="6.8" width="15" height="4.6" fill="#b9b9b9" stroke="#a5a5a5" stroke-width="0.6" rx="1" /></g>
<g transform="translate(953.8,192.0)"><rect x="3.5" y="5" width="11" height="12.5" fill="#bdbdbd" stroke="#a5a5a5" stroke-width="0.7" rx="1.2" /><rect x="2.5" y="2.5" width="13" height="2.8" fill="#b0b0b0" rx="1" /><rect x="6.5" y="0.8" width="5" height="2" fill="#b0b0b0" rx="0.8" /></g>
<rect x="389.5" y="192" width="1" height="18" fill="#dadada" />
<rect x="446" y="192" width="1" height="18" fill="#dadada" />
<rect x="530" y="192" width="1" height="18" fill="#dadada" />
<g transform="translate(27.0,578.0)"><path d="M0,5.25 l4.5,-2.25 l4.5,2.25 l-4.5,2.25Z" fill="#c8c8c8" stroke="#9a9a9a" stroke-width="0.8" /><path d="M0,5.25 l4.5,2.25 v4.95 l-4.5,-2.25Z" fill="#a9a9a9" stroke="#9a9a9a" stroke-width="0.8" /><path d="M4.5,7.5 l4.5,-2.25 v4.95 l-4.5,2.25Z" fill="#bdbdbd" stroke="#9a9a9a" stroke-width="0.8" /><path d="M7,5 L11,1 L9,0 L13,-1 L12.5,3.5 L11.5,2 L8,6Z" fill="#c4c4c4" stroke="#a0a0a0" stroke-width="0.6" /></g>
<circle cx="114" cy="580.5" r="6.2" fill="none" stroke="#6f6f6f" stroke-width="1.6" /><path d="M109.8,585 L118.2,576" fill="none" stroke="#6f6f6f" stroke-width="1.6" />
<path d="M189.5,576.5 l9,9 M198.5,576.5 l-9,9 M194,574.5 v13 M187.5,581 h13" fill="none" stroke="#7a7a7a" stroke-width="2.2" />
<g transform="rotate(0 272.2 609.8)"><rect x="270.8" y="602.8" width="2.8" height="3.2" fill="#c9c9c9" stroke="#b0b0b0" stroke-width="0.6" /></g><g transform="rotate(45 272.2 609.8)"><rect x="270.8" y="602.8" width="2.8" height="3.2" fill="#c9c9c9" stroke="#b0b0b0" stroke-width="0.6" /></g><g transform="rotate(90 272.2 609.8)"><rect x="270.8" y="602.8" width="2.8" height="3.2" fill="#c9c9c9" stroke="#b0b0b0" stroke-width="0.6" /></g><g transform="rotate(135 272.2 609.8)"><rect x="270.8" y="602.8" width="2.8" height="3.2" fill="#c9c9c9" stroke="#b0b0b0" stroke-width="0.6" /></g><g transform="rotate(180 272.2 609.8)"><rect x="270.8" y="602.8" width="2.8" height="3.2" fill="#c9c9c9" stroke="#b0b0b0" stroke-width="0.6" /></g><g transform="rotate(225 272.2 609.8)"><rect x="270.8" y="602.8" width="2.8" height="3.2" fill="#c9c9c9" stroke="#b0b0b0" stroke-width="0.6" /></g><g transform="rotate(270 272.2 609.8)"><rect x="270.8" y="602.8" width="2.8" height="3.2" fill="#c9c9c9" stroke="#b0b0b0" stroke-width="0.6" /></g><g transform="rotate(315 272.2 609.8)"><rect x="270.8" y="602.8" width="2.8" height="3.2" fill="#c9c9c9" stroke="#b0b0b0" stroke-width="0.6" /></g><circle cx="272.2" cy="609.8" r="5" fill="#dedede" stroke="#b0b0b0" stroke-width="1.3" /><circle cx="272.2" cy="609.8" r="2.1" fill="#dedede" stroke="#b0b0b0" stroke-width="1" />
<g transform="translate(196.0,633.5)"><rect x="1" y="4" width="8" height="9" fill="#c9c9c9" stroke="#a8a8a8" stroke-width="0.8" /><rect x="5" y="1" width="8" height="9" fill="#c9c9c9" stroke="#a8a8a8" stroke-width="0.8" /></g>
<g transform="translate(228.0,633.5)"><rect x="2" y="2.5" width="10" height="11" fill="#c9c9c9" stroke="#a8a8a8" stroke-width="0.8" /><rect x="4.5" y="1" width="5" height="2.6" fill="#b8b8b8" /></g>
<path d="M268,634.5 A6.2,6.2 0 1 0 268,646.5" fill="none" stroke="#3b8ec6" stroke-width="2.4" /><path d="M265,632 h5 v4Z" fill="#3b8ec6" />
<path d="M273.8,636 l3.4,-3.6 l3.4,3.6Z" fill="#333" /><path d="M273.8,970.5 l3.4,3.8 l3.4,-3.8Z" fill="#333" />
<path d="M17.5,984.8 v7 l-3.6,-3.5Z" fill="#333" /><path d="M261.5,984.8 v7 l3.6,-3.5Z" fill="#333" />
<path d="M851,61 l3,-3.5 l3,3.5Z" fill="#333" /><path d="M851,66 l3,3.5 l3,-3.5Z" fill="#999" />
</svg>
</body>
</html>
